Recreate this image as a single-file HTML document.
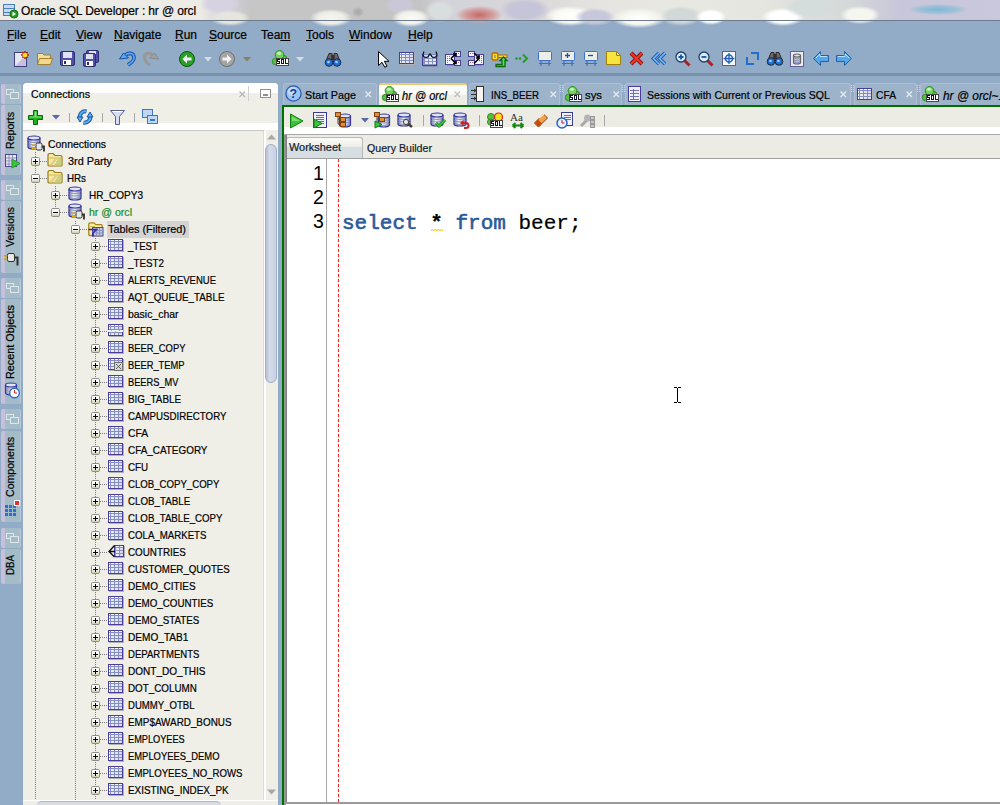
<!DOCTYPE html><html><head><meta charset="utf-8"><style>
*{margin:0;padding:0;box-sizing:border-box}
html,body{width:1000px;height:805px;overflow:hidden;background:#92abc6;font-family:"Liberation Sans",sans-serif;color:#000;position:relative}
.a{position:absolute}
.t{position:absolute;white-space:nowrap;line-height:1;-webkit-text-stroke:0.2px currentColor}
u{text-decoration:underline}
svg{overflow:visible}
</style></head><body><svg width="0" height="0" style="position:absolute"><defs><linearGradient id="gb" x1="0" y1="0" x2="0" y2="1"><stop offset="0" stop-color="#ffffff"/><stop offset="0.55" stop-color="#f4f4f0"/><stop offset="1" stop-color="#c8c89c"/></linearGradient><linearGradient id="cylg" x1="0" y1="0" x2="1" y2="0"><stop offset="0" stop-color="#7078b4"/><stop offset="0.38" stop-color="#f2f3fa"/><stop offset="0.72" stop-color="#c4c8dc"/><stop offset="1" stop-color="#6a70ac"/></linearGradient></defs></svg><div class="a" style="left:0px;top:0px;width:1000px;height:21px;background:linear-gradient(90deg,#ecebe5 0,#ecebe5 200px,#d4d2dc 225px,#c6c6c6 250px,#c4c4c4 420px,#d2d2da 445px,#d8d6d8 520px,#e6e4e0 600px,#e8e8e2 680px,#e6e6e0 760px,#d4d8d8 850px,#c8c6da 900px,#cac8dc 1000px);"></div><div class="a" style="left:200px;top:-6px;width:40px;height:20px;background:radial-gradient(ellipse at center,#d6d2e2 0,#d6d2e2 45%,transparent 72%);"></div><div class="a" style="left:210px;top:10px;width:40px;height:16px;background:radial-gradient(ellipse at center,#e6e6de 0,#e6e6de 45%,transparent 72%);"></div><div class="a" style="left:310px;top:9px;width:42px;height:18px;background:radial-gradient(ellipse at center,#f6f6f0 0,#eeeee8 45%,transparent 72%);"></div><div class="a" style="left:352px;top:7px;width:12px;height:10px;background:radial-gradient(ellipse at center,#a8a8a8 0,#b4b4b4 45%,transparent 72%);"></div><div class="a" style="left:385px;top:-4px;width:30px;height:18px;background:radial-gradient(ellipse at center,#cac8d8 0,#cac8d8 45%,transparent 72%);"></div><div class="a" style="left:392px;top:9px;width:38px;height:18px;background:radial-gradient(ellipse at center,#fafaf6 0,#f2f2ec 45%,transparent 72%);"></div><div class="a" style="left:425px;top:0px;width:30px;height:22px;background:radial-gradient(ellipse at center,#d8dede 0,#d8dede 45%,transparent 72%);"></div><div class="a" style="left:456px;top:6px;width:46px;height:18px;background:radial-gradient(ellipse at center,#c46a6a 0,#d4a0a0 45%,transparent 72%);"></div><div class="a" style="left:500px;top:-2px;width:50px;height:24px;background:radial-gradient(ellipse at center,#c6c4d8 0,#c6c4d8 45%,transparent 72%);"></div><div class="a" style="left:545px;top:6px;width:50px;height:20px;background:radial-gradient(ellipse at center,#ffffff 0,#fafaf4 45%,transparent 72%);"></div><div class="a" style="left:575px;top:8px;width:40px;height:18px;background:radial-gradient(ellipse at center,#c8c8dc 0,#c8c8dc 45%,transparent 72%);"></div><div class="a" style="left:612px;top:8px;width:54px;height:20px;background:radial-gradient(ellipse at center,#ffffff 0,#f6f6f0 45%,transparent 72%);"></div><div class="a" style="left:660px;top:6px;width:42px;height:20px;background:radial-gradient(ellipse at center,#d0d8d8 0,#d0d8d8 45%,transparent 72%);"></div><div class="a" style="left:696px;top:9px;width:30px;height:16px;background:radial-gradient(ellipse at center,#ffffff 0,#ffffff 45%,transparent 72%);"></div><div class="a" style="left:762px;top:8px;width:42px;height:18px;background:radial-gradient(ellipse at center,#ffffff 0,#ffffff 45%,transparent 72%);"></div><div class="a" style="left:785px;top:-4px;width:50px;height:22px;background:radial-gradient(ellipse at center,#d4dcdc 0,#d4dcdc 45%,transparent 72%);"></div><div class="a" style="left:840px;top:6px;width:40px;height:18px;background:radial-gradient(ellipse at center,#f6f6f0 0,#f6f6f0 45%,transparent 72%);"></div><div class="a" style="left:908px;top:4px;width:60px;height:11px;background:radial-gradient(ellipse at center,#7cb8d8 0,#a0c0d8 45%,transparent 72%);"></div><div class="a" style="left:0px;top:20px;width:1000px;height:1px;background:#707c8c;"></div><svg class="a" style="left:3px;top:4px" width="16" height="14" viewBox="0 0 16 14"><rect x="0.5" y="0.5" width="11" height="11" fill="#c8daf0" stroke="#4a80c0"/><rect x="1" y="4" width="10" height="1" fill="#4a80c0"/><rect x="1" y="8" width="10" height="1" fill="#4a80c0"/><circle cx="11" cy="10" r="4" fill="#20a020" stroke="#107010"/><path d="M9.5 7.8 l3.5 2.2 l-3.5 2.2z" fill="#fff"/></svg><div class="t" style="left:21px;top:5px;font-size:12px;color:#000;letter-spacing:-0.13px;">Oracle SQL Developer : hr @ orcl</div><div class="t" style="left:7px;top:29px;font-size:12px;color:#000;"><u>F</u>ile</div><div class="t" style="left:40px;top:29px;font-size:12px;color:#000;"><u>E</u>dit</div><div class="t" style="left:76px;top:29px;font-size:12px;color:#000;"><u>V</u>iew</div><div class="t" style="left:114px;top:29px;font-size:12px;color:#000;"><u>N</u>avigate</div><div class="t" style="left:175px;top:29px;font-size:12px;color:#000;"><u>R</u>un</div><div class="t" style="left:209px;top:29px;font-size:12px;color:#000;"><u>S</u>ource</div><div class="t" style="left:261px;top:29px;font-size:12px;color:#000;">Tea<u>m</u></div><div class="t" style="left:306px;top:29px;font-size:12px;color:#000;"><u>T</u>ools</div><div class="t" style="left:349px;top:29px;font-size:12px;color:#000;"><u>W</u>indow</div><div class="t" style="left:408px;top:29px;font-size:12px;color:#000;"><u>H</u>elp</div><div class="a" style="left:0px;top:73px;width:1000px;height:3px;background:#7891ac;"></div><div class="a" style="left:1px;top:84px;width:20px;height:20px;background:#a4bcc8;border-left:4px solid #c6c0da;border-right:1px solid #b8c8d8;border-radius:2px;"></div><svg class="a" style="left:6px;top:89px" width="13" height="10" viewBox="0 0 13 10" shape-rendering="crispEdges"><rect x="0.5" y="0.5" width="7" height="5" fill="none" stroke="#dce8ee"/><rect x="4.5" y="3.5" width="8" height="6" fill="#a4bcc8" stroke="#dce8ee"/></svg><div class="a" style="left:1px;top:105px;width:20px;height:70px;background:#a4bcc8;border-left:4px solid #c6c0da;border-right:1px solid #b8c8d8;border-radius:2px;"></div><div class="t" style="left:6px;top:149px;font-size:10px;transform-origin:0 0;transform:rotate(-90deg) scaleX(1.0567);">Reports</div><div class="a" style="left:1px;top:180px;width:20px;height:20px;background:#a4bcc8;border-left:4px solid #c6c0da;border-right:1px solid #b8c8d8;border-radius:2px;"></div><svg class="a" style="left:6px;top:185px" width="13" height="10" viewBox="0 0 13 10" shape-rendering="crispEdges"><rect x="0.5" y="0.5" width="7" height="5" fill="none" stroke="#dce8ee"/><rect x="4.5" y="3.5" width="8" height="6" fill="#a4bcc8" stroke="#dce8ee"/></svg><div class="a" style="left:1px;top:201px;width:20px;height:72px;background:#a4bcc8;border-left:4px solid #c6c0da;border-right:1px solid #b8c8d8;border-radius:2px;"></div><div class="t" style="left:6px;top:247px;font-size:10px;transform-origin:0 0;transform:rotate(-90deg) scaleX(1.0428);">Versions</div><div class="a" style="left:1px;top:278px;width:20px;height:20px;background:#a4bcc8;border-left:4px solid #c6c0da;border-right:1px solid #b8c8d8;border-radius:2px;"></div><svg class="a" style="left:6px;top:283px" width="13" height="10" viewBox="0 0 13 10" shape-rendering="crispEdges"><rect x="0.5" y="0.5" width="7" height="5" fill="none" stroke="#dce8ee"/><rect x="4.5" y="3.5" width="8" height="6" fill="#a4bcc8" stroke="#dce8ee"/></svg><div class="a" style="left:1px;top:299px;width:20px;height:105px;background:#a4bcc8;border-left:4px solid #c6c0da;border-right:1px solid #b8c8d8;border-radius:2px;"></div><div class="t" style="left:6px;top:379px;font-size:10px;transform-origin:0 0;transform:rotate(-90deg) scaleX(1.0823);">Recent Objects</div><div class="a" style="left:1px;top:409px;width:20px;height:20px;background:#a4bcc8;border-left:4px solid #c6c0da;border-right:1px solid #b8c8d8;border-radius:2px;"></div><svg class="a" style="left:6px;top:414px" width="13" height="10" viewBox="0 0 13 10" shape-rendering="crispEdges"><rect x="0.5" y="0.5" width="7" height="5" fill="none" stroke="#dce8ee"/><rect x="4.5" y="3.5" width="8" height="6" fill="#a4bcc8" stroke="#dce8ee"/></svg><div class="a" style="left:1px;top:431px;width:20px;height:91px;background:#a4bcc8;border-left:4px solid #c6c0da;border-right:1px solid #b8c8d8;border-radius:2px;"></div><div class="t" style="left:6px;top:497px;font-size:10px;transform-origin:0 0;transform:rotate(-90deg) scaleX(1.0581);">Components</div><div class="a" style="left:1px;top:528px;width:20px;height:20px;background:#a4bcc8;border-left:4px solid #c6c0da;border-right:1px solid #b8c8d8;border-radius:2px;"></div><svg class="a" style="left:6px;top:533px" width="13" height="10" viewBox="0 0 13 10" shape-rendering="crispEdges"><rect x="0.5" y="0.5" width="7" height="5" fill="none" stroke="#dce8ee"/><rect x="4.5" y="3.5" width="8" height="6" fill="#a4bcc8" stroke="#dce8ee"/></svg><div class="a" style="left:1px;top:549px;width:20px;height:35px;background:#a4bcc8;border-left:4px solid #c6c0da;border-right:1px solid #b8c8d8;border-radius:2px;"></div><div class="t" style="left:6px;top:575px;font-size:10px;transform-origin:0 0;transform:rotate(-90deg) scaleX(0.9726);">DBA</div><svg class="a" style="left:4px;top:153px" width="17" height="16" viewBox="0 0 17 16"><rect x="1.5" y="1.5" width="11" height="12" fill="#e8e8f4" stroke="#4a4a90"/><path d="M2 5 h10 M2 8 h10 M2 11 h10 M5 2 v11 M8.5 2 v11" stroke="#9090c0"/><path d="M8 6 l8 4.5 l-8 4.5z" fill="#40c040" stroke="#20a020"/></svg><svg class="a" style="left:4px;top:252px" width="17" height="15" viewBox="0 0 17 15"><rect x="3.5" y="1.5" width="7" height="8" rx="1.5" fill="#e8e8e8" stroke="#303030"/><rect x="0" y="3" width="3.5" height="1.6" fill="#d0a000"/><rect x="0" y="6.5" width="3.5" height="1.6" fill="#d0a000"/><path d="M10.5 5.5 h3 v8" fill="none" stroke="#303030" stroke-width="2"/></svg><svg class="a" style="left:4px;top:382px" width="17" height="17" viewBox="0 0 17 17"><path d="M1.5 3.0 v8 a5.5 2.0 0 0 0 11.0 0 v-8" fill="url(#cylg)" stroke="#34349a" stroke-width="1.2"/><path d="M2.1 5.2 a4.9 2.0 0 0 0 9.8 0" fill="none" stroke="#8c92b8" stroke-width="1"/><path d="M2.1 7.4 a4.9 2.0 0 0 0 9.8 0" fill="none" stroke="#8c92b8" stroke-width="1"/><path d="M2.1 9.7 a4.9 2.0 0 0 0 9.8 0" fill="none" stroke="#8c92b8" stroke-width="1"/><ellipse cx="7" cy="3.0" rx="5.5" ry="2.0" fill="#dfe4f4" stroke="#34349a" stroke-width="1.2"/><circle cx="10.5" cy="11" r="4.8" fill="#fff" stroke="#2a70c8" stroke-width="1.4"/><path d="M10.5 8 v3 h2.5" stroke="#d02020" fill="none"/></svg><svg class="a" style="left:4px;top:500px" width="17" height="17" viewBox="0 0 17 17" shape-rendering="crispEdges"><g fill="#2a70d0"><rect x="1" y="5" width="3" height="3" fill="#2a70d0"/><rect x="1" y="9" width="3" height="3" fill="#2a70d0"/><rect x="1" y="13" width="3" height="3" fill="#2a70d0"/><rect x="5" y="5" width="3" height="3" fill="#2a70d0"/><rect x="5" y="9" width="3" height="3" fill="#2a70d0"/><rect x="5" y="13" width="3" height="3" fill="#2a70d0"/><rect x="9" y="5" width="3" height="3" fill="#2a70d0"/><rect x="9" y="9" width="3" height="3" fill="#2a70d0"/><rect x="9" y="13" width="3" height="3" fill="#2a70d0"/></g><rect x="10.5" y="0.5" width="5" height="5" fill="#e03030" stroke="#fff"/></svg><div class="a" style="left:23px;top:83px;width:255px;height:722px;background:#efeee7;border-radius:4px 4px 0 0;"></div><div class="a" style="left:23px;top:83px;width:255px;height:10px;background:#ffffff;border-radius:4px 4px 0 0;"></div><div class="t" style="left:31px;top:89px;font-size:11px;color:#000;transform:scaleX(0.9642);transform-origin:0 0;">Connections</div><svg class="a" style="left:239px;top:91px" width="7" height="7" viewBox="0 0 7 7"><path d="M0.5 0.5 l5.5 5.5 M6 0.5 l-5.5 5.5" stroke="#b4b4b4" stroke-width="1.2"/></svg><div class="a" style="left:248px;top:86px;width:1px;height:15px;background:#d0d0d0;"></div><svg class="a" style="left:260px;top:89px" width="11" height="9" viewBox="0 0 11 9" shape-rendering="crispEdges"><rect x="0.5" y="0.5" width="10" height="8" fill="#fff" stroke="#909090"/><rect x="3" y="5" width="5" height="2" fill="#909090"/></svg><div class="a" style="left:23px;top:123px;width:255px;height:7px;background:#ffffff;"></div><div class="a" style="left:23px;top:130px;width:241px;height:1px;background:#c8c8c4;"></div><svg class="a" style="left:28px;top:110px" width="16" height="16" viewBox="0 0 16 16"><path d="M5.5 0.5 h4 v5 h5 v4 h-5 v5 h-4 v-5 h-5 v-4 h5z" fill="#20b020" stroke="#086808"/><path d="M6.5 1.5 h2 v5 h5 v1 h-12 v-1 h5z" fill="#80e880"/></svg><svg class="a" style="left:52px;top:115px" width="8" height="5" viewBox="0 0 8 5"><path d="M0 0 h8 l-4 4.5z" fill="#5868a8"/></svg><div class="a" style="left:69px;top:113px;width:1px;height:9px;background:#a8a8a8;"></div><svg class="a" style="left:77px;top:109px" width="16" height="16" viewBox="0 0 16 16"><path d="M9.5 2.5 A5.5 5.5 0 0 0 3 9.5" fill="none" stroke="#1a58a8" stroke-width="4"/><path d="M6.5 13.5 A5.5 5.5 0 0 0 13 6.5" fill="none" stroke="#1a58a8" stroke-width="4"/><path d="M9.5 2.5 A5.5 5.5 0 0 0 3 9.5" fill="none" stroke="#58b0f0" stroke-width="2"/><path d="M6.5 13.5 A5.5 5.5 0 0 0 13 6.5" fill="none" stroke="#58b0f0" stroke-width="2"/><path d="M0 8 h6 l-3 5z" fill="#58b0f0" stroke="#1a58a8"/><path d="M16 8 h-6 l3 -5z" fill="#58b0f0" stroke="#1a58a8"/></svg><div class="a" style="left:102px;top:113px;width:1px;height:9px;background:#a8a8a8;"></div><svg class="a" style="left:110px;top:110px" width="15" height="15" viewBox="0 0 15 15"><path d="M0.5 0.5 h14 l-5 6 v8 h-4 v-8z" fill="#d8dcf0" stroke="#5a6090"/><path d="M2.5 1.5 h10" stroke="#fff"/></svg><div class="a" style="left:134px;top:113px;width:1px;height:9px;background:#a8a8a8;"></div><svg class="a" style="left:142px;top:109px" width="16" height="16" viewBox="0 0 16 16" shape-rendering="crispEdges"><rect x="0.5" y="0.5" width="10" height="8" fill="#c0d8f8" stroke="#3a78c8"/><rect x="5.5" y="6.5" width="10" height="8" fill="#c0d8f8" stroke="#3a78c8"/><rect x="8" y="10" width="5" height="2" fill="#3a78c8"/></svg><div class="a" style="left:263px;top:131px;width:1px;height:669px;background:#d4dce0;"></div><div class="a" style="left:264px;top:131px;width:2px;height:669px;background:#ffffff;"></div><svg class="a" style="left:266px;top:134px" width="11" height="6" viewBox="0 0 11 6"><path d="M1 5.5 h9 l-4.5 -5z" fill="#a8a8a8"/></svg><div class="a" style="left:265px;top:144px;width:12px;height:239px;background:linear-gradient(90deg,#b4c0d6 0,#d4dae8 35%,#c8d0e0 100%);border:1px solid #a0b0c8;border-radius:6px;"></div><svg class="a" style="left:266px;top:789px" width="11" height="6" viewBox="0 0 11 6"><path d="M1 0.5 h9 l-4.5 5z" fill="#a8a8a8"/></svg><div class="a" style="left:23px;top:800px;width:255px;height:1px;background:#ffffff;"></div><div class="a" style="left:23px;top:801px;width:241px;height:4px;background:#efeee7;"></div><div class="a" style="left:37px;top:801px;width:184px;height:5px;background:#d8dce2;border-radius:5px 5px 0 0;border-top:1px solid #b8b0d8;"></div><div class="a" style="left:35px;top:152px;width:1px;height:648px;background:repeating-linear-gradient(180deg,#7c7c7c 0 1px,transparent 1px 2px)"></div><div class="a" style="left:55px;top:186px;width:1px;height:26px;background:repeating-linear-gradient(180deg,#7c7c7c 0 1px,transparent 1px 2px)"></div><div class="a" style="left:75px;top:221px;width:1px;height:579px;background:repeating-linear-gradient(180deg,#7c7c7c 0 1px,transparent 1px 2px)"></div><div class="a" style="left:95px;top:238px;width:1px;height:562px;background:repeating-linear-gradient(180deg,#7c7c7c 0 1px,transparent 1px 2px)"></div><svg class="a" style="left:27px;top:135px" width="18" height="18" viewBox="0 0 18 18"><path d="M1 3.0 v9 a6 2.0 0 0 0 12 0 v-9" fill="url(#cylg)" stroke="#34349a" stroke-width="1.2"/><path d="M1.6 5.5 a5.4 2.0 0 0 0 10.8 0" fill="none" stroke="#8c92b8" stroke-width="1"/><path d="M1.6 8.0 a5.4 2.0 0 0 0 10.8 0" fill="none" stroke="#8c92b8" stroke-width="1"/><path d="M1.6 10.5 a5.4 2.0 0 0 0 10.8 0" fill="none" stroke="#8c92b8" stroke-width="1"/><ellipse cx="7" cy="3.0" rx="6" ry="2.0" fill="#dfe4f4" stroke="#34349a" stroke-width="1.2"/><rect x="9" y="8" width="6" height="7" rx="1.5" fill="#e8e8e8" stroke="#303030"/><rect x="5" y="9.5" width="4" height="1.5" fill="#e0b000"/><rect x="5" y="12.5" width="4" height="1.5" fill="#e0b000"/><path d="M15 11.5 h2 v5" fill="none" stroke="#303030" stroke-width="1.8"/></svg><div class="t" style="left:48px;top:139px;font-size:11px;color:#000;transform:scaleX(0.9479);transform-origin:0 0;">Connections</div><svg class="a" style="left:31px;top:157px" width="9" height="9" viewBox="0 0 9 9"><rect x="0.5" y="0.5" width="8" height="8" rx="1.2" fill="url(#gb)" stroke="#8c8c88"/><rect x="2" y="4" width="5" height="1" fill="#000"/><rect x="4" y="2" width="1" height="5" fill="#000"/></svg><div class="a" style="left:40px;top:161px;width:8px;height:1px;background:repeating-linear-gradient(90deg,#7c7c7c 0 1px,transparent 1px 2px)"></div><svg class="a" style="left:47px;top:153px" width="17" height="15" viewBox="0 0 17 15"><path d="M1 2.5 Q1 0.5 3 0.5 h3 l2 2 h5.5 Q15 2.5 15 4 v8 Q15 13 13.5 13 h-11 Q1 13 1 12z" fill="#f2eaa8" stroke="#9a7818" stroke-width="1.2"/><path d="M1.6 5 h12.8" stroke="#d8c050" stroke-width="1.2"/><path d="M2 12.4 L8 5.6 h3 L4.5 12.4z" fill="#e8c888"/><path d="M7 12.4 L11.5 5.6 h2.9 v6.8z" fill="#c8d080"/></svg><div class="t" style="left:68px;top:156px;font-size:11px;color:#000;transform:scaleX(0.9853);transform-origin:0 0;">3rd Party</div><svg class="a" style="left:31px;top:174px" width="9" height="9" viewBox="0 0 9 9"><rect x="0.5" y="0.5" width="8" height="8" rx="1.2" fill="url(#gb)" stroke="#8c8c88"/><rect x="2" y="4" width="5" height="1" fill="#000"/></svg><div class="a" style="left:40px;top:178px;width:8px;height:1px;background:repeating-linear-gradient(90deg,#7c7c7c 0 1px,transparent 1px 2px)"></div><svg class="a" style="left:47px;top:170px" width="17" height="15" viewBox="0 0 17 15"><path d="M1 2.5 Q1 0.5 3 0.5 h3 l2 2 h5.5 Q15 2.5 15 4 v8 Q15 13 13.5 13 h-11 Q1 13 1 12z" fill="#f2eaa8" stroke="#9a7818" stroke-width="1.2"/><path d="M1.6 5 h12.8" stroke="#d8c050" stroke-width="1.2"/><path d="M2 12.4 L8 5.6 h3 L4.5 12.4z" fill="#e8c888"/><path d="M7 12.4 L11.5 5.6 h2.9 v6.8z" fill="#c8d080"/></svg><div class="t" style="left:67px;top:173px;font-size:11px;color:#000;transform:scaleX(0.8889);transform-origin:0 0;">HRs</div><svg class="a" style="left:51px;top:191px" width="9" height="9" viewBox="0 0 9 9"><rect x="0.5" y="0.5" width="8" height="8" rx="1.2" fill="url(#gb)" stroke="#8c8c88"/><rect x="2" y="4" width="5" height="1" fill="#000"/><rect x="4" y="2" width="1" height="5" fill="#000"/></svg><div class="a" style="left:60px;top:195px;width:9px;height:1px;background:repeating-linear-gradient(90deg,#7c7c7c 0 1px,transparent 1px 2px)"></div><svg class="a" style="left:68px;top:186px" width="18" height="17" viewBox="0 0 18 17"><path d="M1 3.0 v9 a6 2.0 0 0 0 12 0 v-9" fill="url(#cylg)" stroke="#34349a" stroke-width="1.2"/><path d="M1.6 5.5 a5.4 2.0 0 0 0 10.8 0" fill="none" stroke="#8c92b8" stroke-width="1"/><path d="M1.6 8.0 a5.4 2.0 0 0 0 10.8 0" fill="none" stroke="#8c92b8" stroke-width="1"/><path d="M1.6 10.5 a5.4 2.0 0 0 0 10.8 0" fill="none" stroke="#8c92b8" stroke-width="1"/><ellipse cx="7" cy="3.0" rx="6" ry="2.0" fill="#dfe4f4" stroke="#34349a" stroke-width="1.2"/></svg><div class="t" style="left:89px;top:190px;font-size:11px;color:#000;transform:scaleX(0.9104);transform-origin:0 0;">HR_COPY3</div><svg class="a" style="left:51px;top:208px" width="9" height="9" viewBox="0 0 9 9"><rect x="0.5" y="0.5" width="8" height="8" rx="1.2" fill="url(#gb)" stroke="#8c8c88"/><rect x="2" y="4" width="5" height="1" fill="#000"/></svg><div class="a" style="left:60px;top:212px;width:9px;height:1px;background:repeating-linear-gradient(90deg,#7c7c7c 0 1px,transparent 1px 2px)"></div><svg class="a" style="left:68px;top:203px" width="18" height="17" viewBox="0 0 18 17"><path d="M1 3.0 v9 a6 2.0 0 0 0 12 0 v-9" fill="url(#cylg)" stroke="#34349a" stroke-width="1.2"/><path d="M1.6 5.5 a5.4 2.0 0 0 0 10.8 0" fill="none" stroke="#8c92b8" stroke-width="1"/><path d="M1.6 8.0 a5.4 2.0 0 0 0 10.8 0" fill="none" stroke="#8c92b8" stroke-width="1"/><path d="M1.6 10.5 a5.4 2.0 0 0 0 10.8 0" fill="none" stroke="#8c92b8" stroke-width="1"/><ellipse cx="7" cy="3.0" rx="6" ry="2.0" fill="#dfe4f4" stroke="#34349a" stroke-width="1.2"/><rect x="8" y="8" width="6" height="7" rx="1.5" fill="#e8e8e8" stroke="#303030"/><rect x="4" y="9.5" width="4" height="1.5" fill="#e0b000"/><rect x="4" y="12.5" width="4" height="1.5" fill="#e0b000"/><path d="M14 11.5 h2 v5" fill="none" stroke="#303030" stroke-width="1.8"/></svg><div class="t" style="left:89px;top:207px;font-size:11px;color:#148a2a;transform:scaleX(0.9599);transform-origin:0 0;">hr @ orcl</div><div class="a" style="left:107px;top:221px;width:82px;height:17px;background:#d4d4d4;"></div><svg class="a" style="left:71px;top:225px" width="9" height="9" viewBox="0 0 9 9"><rect x="0.5" y="0.5" width="8" height="8" rx="1.2" fill="url(#gb)" stroke="#8c8c88"/><rect x="2" y="4" width="5" height="1" fill="#000"/></svg><div class="a" style="left:80px;top:229px;width:8px;height:1px;background:repeating-linear-gradient(90deg,#7c7c7c 0 1px,transparent 1px 2px)"></div><svg class="a" style="left:88px;top:222px" width="17" height="16" viewBox="0 0 17 16"><path d="M0.8 12.5 V2.5 Q0.8 0.8 2.5 0.8 h3.5 l1.8 1.8 h5.5 Q14.2 2.6 14.2 4 v8.5 Q14.2 13.5 13 13.5 H2 Q0.8 13.5 0.8 12.5z" fill="#f6f0b0" stroke="#a88418" stroke-width="1.3"/><path d="M1.5 4.5 h5.5" stroke="#e0c040" stroke-width="1.2"/><rect x="4.5" y="5.5" width="10.5" height="8.5" fill="#c4c8e4" stroke="#4a4a9a"/><path d="M5 8.5 h9.5 M5 11 h9.5 M8.5 6 v8 M11.5 6 v8" stroke="#8a94c0" stroke-width="1"/><path d="M0.5 7.5 h8 l-3.5 3.5 v3.5" stroke="#3a2a9a" stroke-width="1.6" fill="none"/></svg><div class="t" style="left:108px;top:224px;font-size:11px;color:#000;transform:scaleX(0.9889);transform-origin:0 0;">Tables (Filtered)</div><svg class="a" style="left:91px;top:242px" width="9" height="9" viewBox="0 0 9 9"><rect x="0.5" y="0.5" width="8" height="8" rx="1.2" fill="url(#gb)" stroke="#8c8c88"/><rect x="2" y="4" width="5" height="1" fill="#000"/><rect x="4" y="2" width="1" height="5" fill="#000"/></svg><div class="a" style="left:100px;top:246px;width:8px;height:1px;background:repeating-linear-gradient(90deg,#7c7c7c 0 1px,transparent 1px 2px)"></div><svg class="a" style="left:108px;top:239px" width="16" height="13" viewBox="0 0 16 13" shape-rendering="crispEdges"><rect x="1" y="12" width="15" height="1" fill="#b0b0b8"/><rect x="15" y="1" width="1" height="12" fill="#b0b0b8"/><rect x="0" y="0" width="15" height="12" fill="#4a3c98"/><rect x="1" y="1" width="13" height="10" fill="#8290c0"/><rect x="1" y="1" width="1" height="1" fill="#fff"/><rect x="3" y="1" width="3" height="1" fill="#f4f4ff"/><rect x="7" y="1" width="3" height="1" fill="#f4f4ff"/><rect x="11" y="1" width="3" height="1" fill="#f4f4ff"/><rect x="1" y="3" width="1" height="2" fill="#ffffff"/><rect x="3" y="3" width="3" height="2" fill="#eceaf0"/><rect x="7" y="3" width="3" height="2" fill="#e4e4f0"/><rect x="11" y="3" width="3" height="2" fill="#dcdcf0"/><rect x="1" y="6" width="1" height="2" fill="#ffffff"/><rect x="3" y="6" width="3" height="2" fill="#eceaf0"/><rect x="7" y="6" width="3" height="2" fill="#e4e4f0"/><rect x="11" y="6" width="3" height="2" fill="#dcdcf0"/><rect x="1" y="9" width="1" height="2" fill="#ffffff"/><rect x="3" y="9" width="3" height="2" fill="#eceaf0"/><rect x="7" y="9" width="3" height="2" fill="#e4e4f0"/><rect x="11" y="9" width="3" height="2" fill="#dcdcf0"/></svg><div class="t" style="left:127.5px;top:241px;font-size:11px;color:#000;transform:scaleX(0.8730);transform-origin:0 0;">_TEST</div><svg class="a" style="left:91px;top:259px" width="9" height="9" viewBox="0 0 9 9"><rect x="0.5" y="0.5" width="8" height="8" rx="1.2" fill="url(#gb)" stroke="#8c8c88"/><rect x="2" y="4" width="5" height="1" fill="#000"/><rect x="4" y="2" width="1" height="5" fill="#000"/></svg><div class="a" style="left:100px;top:263px;width:8px;height:1px;background:repeating-linear-gradient(90deg,#7c7c7c 0 1px,transparent 1px 2px)"></div><svg class="a" style="left:108px;top:256px" width="16" height="13" viewBox="0 0 16 13" shape-rendering="crispEdges"><rect x="1" y="12" width="15" height="1" fill="#b0b0b8"/><rect x="15" y="1" width="1" height="12" fill="#b0b0b8"/><rect x="0" y="0" width="15" height="12" fill="#4a3c98"/><rect x="1" y="1" width="13" height="10" fill="#8290c0"/><rect x="1" y="1" width="1" height="1" fill="#fff"/><rect x="3" y="1" width="3" height="1" fill="#f4f4ff"/><rect x="7" y="1" width="3" height="1" fill="#f4f4ff"/><rect x="11" y="1" width="3" height="1" fill="#f4f4ff"/><rect x="1" y="3" width="1" height="2" fill="#ffffff"/><rect x="3" y="3" width="3" height="2" fill="#eceaf0"/><rect x="7" y="3" width="3" height="2" fill="#e4e4f0"/><rect x="11" y="3" width="3" height="2" fill="#dcdcf0"/><rect x="1" y="6" width="1" height="2" fill="#ffffff"/><rect x="3" y="6" width="3" height="2" fill="#eceaf0"/><rect x="7" y="6" width="3" height="2" fill="#e4e4f0"/><rect x="11" y="6" width="3" height="2" fill="#dcdcf0"/><rect x="1" y="9" width="1" height="2" fill="#ffffff"/><rect x="3" y="9" width="3" height="2" fill="#eceaf0"/><rect x="7" y="9" width="3" height="2" fill="#e4e4f0"/><rect x="11" y="9" width="3" height="2" fill="#dcdcf0"/></svg><div class="t" style="left:127.5px;top:258px;font-size:11px;color:#000;transform:scaleX(0.8941);transform-origin:0 0;">_TEST2</div><svg class="a" style="left:91px;top:276px" width="9" height="9" viewBox="0 0 9 9"><rect x="0.5" y="0.5" width="8" height="8" rx="1.2" fill="url(#gb)" stroke="#8c8c88"/><rect x="2" y="4" width="5" height="1" fill="#000"/><rect x="4" y="2" width="1" height="5" fill="#000"/></svg><div class="a" style="left:100px;top:280px;width:8px;height:1px;background:repeating-linear-gradient(90deg,#7c7c7c 0 1px,transparent 1px 2px)"></div><svg class="a" style="left:108px;top:273px" width="16" height="13" viewBox="0 0 16 13" shape-rendering="crispEdges"><rect x="1" y="12" width="15" height="1" fill="#b0b0b8"/><rect x="15" y="1" width="1" height="12" fill="#b0b0b8"/><rect x="0" y="0" width="15" height="12" fill="#4a3c98"/><rect x="1" y="1" width="13" height="10" fill="#8290c0"/><rect x="1" y="1" width="1" height="1" fill="#fff"/><rect x="3" y="1" width="3" height="1" fill="#f4f4ff"/><rect x="7" y="1" width="3" height="1" fill="#f4f4ff"/><rect x="11" y="1" width="3" height="1" fill="#f4f4ff"/><rect x="1" y="3" width="1" height="2" fill="#ffffff"/><rect x="3" y="3" width="3" height="2" fill="#eceaf0"/><rect x="7" y="3" width="3" height="2" fill="#e4e4f0"/><rect x="11" y="3" width="3" height="2" fill="#dcdcf0"/><rect x="1" y="6" width="1" height="2" fill="#ffffff"/><rect x="3" y="6" width="3" height="2" fill="#eceaf0"/><rect x="7" y="6" width="3" height="2" fill="#e4e4f0"/><rect x="11" y="6" width="3" height="2" fill="#dcdcf0"/><rect x="1" y="9" width="1" height="2" fill="#ffffff"/><rect x="3" y="9" width="3" height="2" fill="#eceaf0"/><rect x="7" y="9" width="3" height="2" fill="#e4e4f0"/><rect x="11" y="9" width="3" height="2" fill="#dcdcf0"/></svg><div class="t" style="left:127.5px;top:275px;font-size:11px;color:#000;transform:scaleX(0.8634);transform-origin:0 0;">ALERTS_REVENUE</div><svg class="a" style="left:91px;top:293px" width="9" height="9" viewBox="0 0 9 9"><rect x="0.5" y="0.5" width="8" height="8" rx="1.2" fill="url(#gb)" stroke="#8c8c88"/><rect x="2" y="4" width="5" height="1" fill="#000"/><rect x="4" y="2" width="1" height="5" fill="#000"/></svg><div class="a" style="left:100px;top:297px;width:8px;height:1px;background:repeating-linear-gradient(90deg,#7c7c7c 0 1px,transparent 1px 2px)"></div><svg class="a" style="left:108px;top:290px" width="16" height="13" viewBox="0 0 16 13" shape-rendering="crispEdges"><rect x="1" y="12" width="15" height="1" fill="#b0b0b8"/><rect x="15" y="1" width="1" height="12" fill="#b0b0b8"/><rect x="0" y="0" width="15" height="12" fill="#4a3c98"/><rect x="1" y="1" width="13" height="10" fill="#8290c0"/><rect x="1" y="1" width="1" height="1" fill="#fff"/><rect x="3" y="1" width="3" height="1" fill="#f4f4ff"/><rect x="7" y="1" width="3" height="1" fill="#f4f4ff"/><rect x="11" y="1" width="3" height="1" fill="#f4f4ff"/><rect x="1" y="3" width="1" height="2" fill="#ffffff"/><rect x="3" y="3" width="3" height="2" fill="#eceaf0"/><rect x="7" y="3" width="3" height="2" fill="#e4e4f0"/><rect x="11" y="3" width="3" height="2" fill="#dcdcf0"/><rect x="1" y="6" width="1" height="2" fill="#ffffff"/><rect x="3" y="6" width="3" height="2" fill="#eceaf0"/><rect x="7" y="6" width="3" height="2" fill="#e4e4f0"/><rect x="11" y="6" width="3" height="2" fill="#dcdcf0"/><rect x="1" y="9" width="1" height="2" fill="#ffffff"/><rect x="3" y="9" width="3" height="2" fill="#eceaf0"/><rect x="7" y="9" width="3" height="2" fill="#e4e4f0"/><rect x="11" y="9" width="3" height="2" fill="#dcdcf0"/></svg><div class="t" style="left:127.5px;top:292px;font-size:11px;color:#000;transform:scaleX(0.8930);transform-origin:0 0;">AQT_QUEUE_TABLE</div><svg class="a" style="left:91px;top:310px" width="9" height="9" viewBox="0 0 9 9"><rect x="0.5" y="0.5" width="8" height="8" rx="1.2" fill="url(#gb)" stroke="#8c8c88"/><rect x="2" y="4" width="5" height="1" fill="#000"/><rect x="4" y="2" width="1" height="5" fill="#000"/></svg><div class="a" style="left:100px;top:314px;width:8px;height:1px;background:repeating-linear-gradient(90deg,#7c7c7c 0 1px,transparent 1px 2px)"></div><svg class="a" style="left:108px;top:307px" width="16" height="13" viewBox="0 0 16 13" shape-rendering="crispEdges"><rect x="1" y="12" width="15" height="1" fill="#b0b0b8"/><rect x="15" y="1" width="1" height="12" fill="#b0b0b8"/><rect x="0" y="0" width="15" height="12" fill="#4a3c98"/><rect x="1" y="1" width="13" height="10" fill="#8290c0"/><rect x="1" y="1" width="1" height="1" fill="#fff"/><rect x="3" y="1" width="3" height="1" fill="#f4f4ff"/><rect x="7" y="1" width="3" height="1" fill="#f4f4ff"/><rect x="11" y="1" width="3" height="1" fill="#f4f4ff"/><rect x="1" y="3" width="1" height="2" fill="#ffffff"/><rect x="3" y="3" width="3" height="2" fill="#eceaf0"/><rect x="7" y="3" width="3" height="2" fill="#e4e4f0"/><rect x="11" y="3" width="3" height="2" fill="#dcdcf0"/><rect x="1" y="6" width="1" height="2" fill="#ffffff"/><rect x="3" y="6" width="3" height="2" fill="#eceaf0"/><rect x="7" y="6" width="3" height="2" fill="#e4e4f0"/><rect x="11" y="6" width="3" height="2" fill="#dcdcf0"/><rect x="1" y="9" width="1" height="2" fill="#ffffff"/><rect x="3" y="9" width="3" height="2" fill="#eceaf0"/><rect x="7" y="9" width="3" height="2" fill="#e4e4f0"/><rect x="11" y="9" width="3" height="2" fill="#dcdcf0"/></svg><div class="t" style="left:127.5px;top:309px;font-size:11px;color:#000;transform:scaleX(0.9489);transform-origin:0 0;">basic_char</div><svg class="a" style="left:91px;top:327px" width="9" height="9" viewBox="0 0 9 9"><rect x="0.5" y="0.5" width="8" height="8" rx="1.2" fill="url(#gb)" stroke="#8c8c88"/><rect x="2" y="4" width="5" height="1" fill="#000"/><rect x="4" y="2" width="1" height="5" fill="#000"/></svg><div class="a" style="left:100px;top:331px;width:8px;height:1px;background:repeating-linear-gradient(90deg,#7c7c7c 0 1px,transparent 1px 2px)"></div><svg class="a" style="left:108px;top:324px" width="16" height="13" viewBox="0 0 16 13" shape-rendering="crispEdges"><rect x="1" y="12" width="15" height="1" fill="#b0b0b8"/><rect x="15" y="1" width="1" height="12" fill="#b0b0b8"/><rect x="0" y="0" width="15" height="12" fill="#4a3c98"/><rect x="1" y="1" width="13" height="10" fill="#8290c0"/><rect x="1" y="1" width="1" height="1" fill="#fff"/><rect x="3" y="1" width="3" height="1" fill="#f4f4ff"/><rect x="7" y="1" width="3" height="1" fill="#f4f4ff"/><rect x="11" y="1" width="3" height="1" fill="#f4f4ff"/><rect x="1" y="3" width="1" height="2" fill="#ffffff"/><rect x="3" y="3" width="3" height="2" fill="#eceaf0"/><rect x="7" y="3" width="3" height="2" fill="#e4e4f0"/><rect x="11" y="3" width="3" height="2" fill="#dcdcf0"/><rect x="1" y="6" width="1" height="2" fill="#ffffff"/><rect x="3" y="6" width="3" height="2" fill="#eceaf0"/><rect x="7" y="6" width="3" height="2" fill="#e4e4f0"/><rect x="11" y="6" width="3" height="2" fill="#dcdcf0"/><rect x="1" y="9" width="1" height="2" fill="#ffffff"/><rect x="3" y="9" width="3" height="2" fill="#eceaf0"/><rect x="7" y="9" width="3" height="2" fill="#e4e4f0"/><rect x="11" y="9" width="3" height="2" fill="#dcdcf0"/></svg><svg class="a" style="left:108px;top:324px" width="16" height="13" viewBox="0 0 16 13" shape-rendering="crispEdges"><rect x="0" y="6" width="15" height="2" fill="#f2f4f0"/><rect x="3" y="6" width="1" height="1" fill="#a8b8d0"/><rect x="7" y="7" width="1" height="1" fill="#b8a8d8"/><rect x="11" y="6" width="1" height="1" fill="#a8b8d0"/></svg><div class="t" style="left:127.5px;top:326px;font-size:11px;color:#000;transform:scaleX(0.8175);transform-origin:0 0;">BEER</div><svg class="a" style="left:91px;top:344px" width="9" height="9" viewBox="0 0 9 9"><rect x="0.5" y="0.5" width="8" height="8" rx="1.2" fill="url(#gb)" stroke="#8c8c88"/><rect x="2" y="4" width="5" height="1" fill="#000"/><rect x="4" y="2" width="1" height="5" fill="#000"/></svg><div class="a" style="left:100px;top:348px;width:8px;height:1px;background:repeating-linear-gradient(90deg,#7c7c7c 0 1px,transparent 1px 2px)"></div><svg class="a" style="left:108px;top:341px" width="16" height="13" viewBox="0 0 16 13" shape-rendering="crispEdges"><rect x="1" y="12" width="15" height="1" fill="#b0b0b8"/><rect x="15" y="1" width="1" height="12" fill="#b0b0b8"/><rect x="0" y="0" width="15" height="12" fill="#4a3c98"/><rect x="1" y="1" width="13" height="10" fill="#8290c0"/><rect x="1" y="1" width="1" height="1" fill="#fff"/><rect x="3" y="1" width="3" height="1" fill="#f4f4ff"/><rect x="7" y="1" width="3" height="1" fill="#f4f4ff"/><rect x="11" y="1" width="3" height="1" fill="#f4f4ff"/><rect x="1" y="3" width="1" height="2" fill="#ffffff"/><rect x="3" y="3" width="3" height="2" fill="#eceaf0"/><rect x="7" y="3" width="3" height="2" fill="#e4e4f0"/><rect x="11" y="3" width="3" height="2" fill="#dcdcf0"/><rect x="1" y="6" width="1" height="2" fill="#ffffff"/><rect x="3" y="6" width="3" height="2" fill="#eceaf0"/><rect x="7" y="6" width="3" height="2" fill="#e4e4f0"/><rect x="11" y="6" width="3" height="2" fill="#dcdcf0"/><rect x="1" y="9" width="1" height="2" fill="#ffffff"/><rect x="3" y="9" width="3" height="2" fill="#eceaf0"/><rect x="7" y="9" width="3" height="2" fill="#e4e4f0"/><rect x="11" y="9" width="3" height="2" fill="#dcdcf0"/></svg><div class="t" style="left:127.5px;top:343px;font-size:11px;color:#000;transform:scaleX(0.8546);transform-origin:0 0;">BEER_COPY</div><svg class="a" style="left:91px;top:361px" width="9" height="9" viewBox="0 0 9 9"><rect x="0.5" y="0.5" width="8" height="8" rx="1.2" fill="url(#gb)" stroke="#8c8c88"/><rect x="2" y="4" width="5" height="1" fill="#000"/><rect x="4" y="2" width="1" height="5" fill="#000"/></svg><div class="a" style="left:100px;top:365px;width:8px;height:1px;background:repeating-linear-gradient(90deg,#7c7c7c 0 1px,transparent 1px 2px)"></div><svg class="a" style="left:108px;top:358px" width="16" height="13" viewBox="0 0 16 13" shape-rendering="crispEdges"><rect x="1" y="12" width="15" height="1" fill="#b0b0b8"/><rect x="15" y="1" width="1" height="12" fill="#b0b0b8"/><rect x="0" y="0" width="15" height="12" fill="#4a3c98"/><rect x="1" y="1" width="13" height="10" fill="#8290c0"/><rect x="1" y="1" width="1" height="1" fill="#fff"/><rect x="3" y="1" width="3" height="1" fill="#f4f4ff"/><rect x="7" y="1" width="3" height="1" fill="#f4f4ff"/><rect x="11" y="1" width="3" height="1" fill="#f4f4ff"/><rect x="1" y="3" width="1" height="2" fill="#ffffff"/><rect x="3" y="3" width="3" height="2" fill="#eceaf0"/><rect x="7" y="3" width="3" height="2" fill="#e4e4f0"/><rect x="11" y="3" width="3" height="2" fill="#dcdcf0"/><rect x="1" y="6" width="1" height="2" fill="#ffffff"/><rect x="3" y="6" width="3" height="2" fill="#eceaf0"/><rect x="7" y="6" width="3" height="2" fill="#e4e4f0"/><rect x="11" y="6" width="3" height="2" fill="#dcdcf0"/><rect x="1" y="9" width="1" height="2" fill="#ffffff"/><rect x="3" y="9" width="3" height="2" fill="#eceaf0"/><rect x="7" y="9" width="3" height="2" fill="#e4e4f0"/><rect x="11" y="9" width="3" height="2" fill="#dcdcf0"/></svg><svg class="a" style="left:114px;top:362px" width="9" height="9" viewBox="0 0 9 9" shape-rendering="crispEdges"><rect x="0.5" y="0.5" width="8" height="8" fill="#d8d8d8" stroke="#707070"/><path d="M2 2 l5 5 M7 2 l-5 5" stroke="#606060"/></svg><div class="t" style="left:127.5px;top:360px;font-size:11px;color:#000;transform:scaleX(0.8476);transform-origin:0 0;">BEER_TEMP</div><svg class="a" style="left:91px;top:378px" width="9" height="9" viewBox="0 0 9 9"><rect x="0.5" y="0.5" width="8" height="8" rx="1.2" fill="url(#gb)" stroke="#8c8c88"/><rect x="2" y="4" width="5" height="1" fill="#000"/><rect x="4" y="2" width="1" height="5" fill="#000"/></svg><div class="a" style="left:100px;top:382px;width:8px;height:1px;background:repeating-linear-gradient(90deg,#7c7c7c 0 1px,transparent 1px 2px)"></div><svg class="a" style="left:108px;top:375px" width="16" height="13" viewBox="0 0 16 13" shape-rendering="crispEdges"><rect x="1" y="12" width="15" height="1" fill="#b0b0b8"/><rect x="15" y="1" width="1" height="12" fill="#b0b0b8"/><rect x="0" y="0" width="15" height="12" fill="#4a3c98"/><rect x="1" y="1" width="13" height="10" fill="#8290c0"/><rect x="1" y="1" width="1" height="1" fill="#fff"/><rect x="3" y="1" width="3" height="1" fill="#f4f4ff"/><rect x="7" y="1" width="3" height="1" fill="#f4f4ff"/><rect x="11" y="1" width="3" height="1" fill="#f4f4ff"/><rect x="1" y="3" width="1" height="2" fill="#ffffff"/><rect x="3" y="3" width="3" height="2" fill="#eceaf0"/><rect x="7" y="3" width="3" height="2" fill="#e4e4f0"/><rect x="11" y="3" width="3" height="2" fill="#dcdcf0"/><rect x="1" y="6" width="1" height="2" fill="#ffffff"/><rect x="3" y="6" width="3" height="2" fill="#eceaf0"/><rect x="7" y="6" width="3" height="2" fill="#e4e4f0"/><rect x="11" y="6" width="3" height="2" fill="#dcdcf0"/><rect x="1" y="9" width="1" height="2" fill="#ffffff"/><rect x="3" y="9" width="3" height="2" fill="#eceaf0"/><rect x="7" y="9" width="3" height="2" fill="#e4e4f0"/><rect x="11" y="9" width="3" height="2" fill="#dcdcf0"/></svg><div class="t" style="left:127.5px;top:377px;font-size:11px;color:#000;transform:scaleX(0.8425);transform-origin:0 0;">BEERS_MV</div><svg class="a" style="left:91px;top:395px" width="9" height="9" viewBox="0 0 9 9"><rect x="0.5" y="0.5" width="8" height="8" rx="1.2" fill="url(#gb)" stroke="#8c8c88"/><rect x="2" y="4" width="5" height="1" fill="#000"/><rect x="4" y="2" width="1" height="5" fill="#000"/></svg><div class="a" style="left:100px;top:399px;width:8px;height:1px;background:repeating-linear-gradient(90deg,#7c7c7c 0 1px,transparent 1px 2px)"></div><svg class="a" style="left:108px;top:392px" width="16" height="13" viewBox="0 0 16 13" shape-rendering="crispEdges"><rect x="1" y="12" width="15" height="1" fill="#b0b0b8"/><rect x="15" y="1" width="1" height="12" fill="#b0b0b8"/><rect x="0" y="0" width="15" height="12" fill="#4a3c98"/><rect x="1" y="1" width="13" height="10" fill="#8290c0"/><rect x="1" y="1" width="1" height="1" fill="#fff"/><rect x="3" y="1" width="3" height="1" fill="#f4f4ff"/><rect x="7" y="1" width="3" height="1" fill="#f4f4ff"/><rect x="11" y="1" width="3" height="1" fill="#f4f4ff"/><rect x="1" y="3" width="1" height="2" fill="#ffffff"/><rect x="3" y="3" width="3" height="2" fill="#eceaf0"/><rect x="7" y="3" width="3" height="2" fill="#e4e4f0"/><rect x="11" y="3" width="3" height="2" fill="#dcdcf0"/><rect x="1" y="6" width="1" height="2" fill="#ffffff"/><rect x="3" y="6" width="3" height="2" fill="#eceaf0"/><rect x="7" y="6" width="3" height="2" fill="#e4e4f0"/><rect x="11" y="6" width="3" height="2" fill="#dcdcf0"/><rect x="1" y="9" width="1" height="2" fill="#ffffff"/><rect x="3" y="9" width="3" height="2" fill="#eceaf0"/><rect x="7" y="9" width="3" height="2" fill="#e4e4f0"/><rect x="11" y="9" width="3" height="2" fill="#dcdcf0"/></svg><div class="t" style="left:127.5px;top:394px;font-size:11px;color:#000;transform:scaleX(0.8993);transform-origin:0 0;">BIG_TABLE</div><svg class="a" style="left:91px;top:412px" width="9" height="9" viewBox="0 0 9 9"><rect x="0.5" y="0.5" width="8" height="8" rx="1.2" fill="url(#gb)" stroke="#8c8c88"/><rect x="2" y="4" width="5" height="1" fill="#000"/><rect x="4" y="2" width="1" height="5" fill="#000"/></svg><div class="a" style="left:100px;top:416px;width:8px;height:1px;background:repeating-linear-gradient(90deg,#7c7c7c 0 1px,transparent 1px 2px)"></div><svg class="a" style="left:108px;top:409px" width="16" height="13" viewBox="0 0 16 13" shape-rendering="crispEdges"><rect x="1" y="12" width="15" height="1" fill="#b0b0b8"/><rect x="15" y="1" width="1" height="12" fill="#b0b0b8"/><rect x="0" y="0" width="15" height="12" fill="#4a3c98"/><rect x="1" y="1" width="13" height="10" fill="#8290c0"/><rect x="1" y="1" width="1" height="1" fill="#fff"/><rect x="3" y="1" width="3" height="1" fill="#f4f4ff"/><rect x="7" y="1" width="3" height="1" fill="#f4f4ff"/><rect x="11" y="1" width="3" height="1" fill="#f4f4ff"/><rect x="1" y="3" width="1" height="2" fill="#ffffff"/><rect x="3" y="3" width="3" height="2" fill="#eceaf0"/><rect x="7" y="3" width="3" height="2" fill="#e4e4f0"/><rect x="11" y="3" width="3" height="2" fill="#dcdcf0"/><rect x="1" y="6" width="1" height="2" fill="#ffffff"/><rect x="3" y="6" width="3" height="2" fill="#eceaf0"/><rect x="7" y="6" width="3" height="2" fill="#e4e4f0"/><rect x="11" y="6" width="3" height="2" fill="#dcdcf0"/><rect x="1" y="9" width="1" height="2" fill="#ffffff"/><rect x="3" y="9" width="3" height="2" fill="#eceaf0"/><rect x="7" y="9" width="3" height="2" fill="#e4e4f0"/><rect x="11" y="9" width="3" height="2" fill="#dcdcf0"/></svg><div class="t" style="left:127.5px;top:411px;font-size:11px;color:#000;transform:scaleX(0.8839);transform-origin:0 0;">CAMPUSDIRECTORY</div><svg class="a" style="left:91px;top:429px" width="9" height="9" viewBox="0 0 9 9"><rect x="0.5" y="0.5" width="8" height="8" rx="1.2" fill="url(#gb)" stroke="#8c8c88"/><rect x="2" y="4" width="5" height="1" fill="#000"/><rect x="4" y="2" width="1" height="5" fill="#000"/></svg><div class="a" style="left:100px;top:433px;width:8px;height:1px;background:repeating-linear-gradient(90deg,#7c7c7c 0 1px,transparent 1px 2px)"></div><svg class="a" style="left:108px;top:426px" width="16" height="13" viewBox="0 0 16 13" shape-rendering="crispEdges"><rect x="1" y="12" width="15" height="1" fill="#b0b0b8"/><rect x="15" y="1" width="1" height="12" fill="#b0b0b8"/><rect x="0" y="0" width="15" height="12" fill="#4a3c98"/><rect x="1" y="1" width="13" height="10" fill="#8290c0"/><rect x="1" y="1" width="1" height="1" fill="#fff"/><rect x="3" y="1" width="3" height="1" fill="#f4f4ff"/><rect x="7" y="1" width="3" height="1" fill="#f4f4ff"/><rect x="11" y="1" width="3" height="1" fill="#f4f4ff"/><rect x="1" y="3" width="1" height="2" fill="#ffffff"/><rect x="3" y="3" width="3" height="2" fill="#eceaf0"/><rect x="7" y="3" width="3" height="2" fill="#e4e4f0"/><rect x="11" y="3" width="3" height="2" fill="#dcdcf0"/><rect x="1" y="6" width="1" height="2" fill="#ffffff"/><rect x="3" y="6" width="3" height="2" fill="#eceaf0"/><rect x="7" y="6" width="3" height="2" fill="#e4e4f0"/><rect x="11" y="6" width="3" height="2" fill="#dcdcf0"/><rect x="1" y="9" width="1" height="2" fill="#ffffff"/><rect x="3" y="9" width="3" height="2" fill="#eceaf0"/><rect x="7" y="9" width="3" height="2" fill="#e4e4f0"/><rect x="11" y="9" width="3" height="2" fill="#dcdcf0"/></svg><div class="t" style="left:127.5px;top:428px;font-size:11px;color:#000;transform:scaleX(0.9397);transform-origin:0 0;">CFA</div><svg class="a" style="left:91px;top:446px" width="9" height="9" viewBox="0 0 9 9"><rect x="0.5" y="0.5" width="8" height="8" rx="1.2" fill="url(#gb)" stroke="#8c8c88"/><rect x="2" y="4" width="5" height="1" fill="#000"/><rect x="4" y="2" width="1" height="5" fill="#000"/></svg><div class="a" style="left:100px;top:450px;width:8px;height:1px;background:repeating-linear-gradient(90deg,#7c7c7c 0 1px,transparent 1px 2px)"></div><svg class="a" style="left:108px;top:443px" width="16" height="13" viewBox="0 0 16 13" shape-rendering="crispEdges"><rect x="1" y="12" width="15" height="1" fill="#b0b0b8"/><rect x="15" y="1" width="1" height="12" fill="#b0b0b8"/><rect x="0" y="0" width="15" height="12" fill="#4a3c98"/><rect x="1" y="1" width="13" height="10" fill="#8290c0"/><rect x="1" y="1" width="1" height="1" fill="#fff"/><rect x="3" y="1" width="3" height="1" fill="#f4f4ff"/><rect x="7" y="1" width="3" height="1" fill="#f4f4ff"/><rect x="11" y="1" width="3" height="1" fill="#f4f4ff"/><rect x="1" y="3" width="1" height="2" fill="#ffffff"/><rect x="3" y="3" width="3" height="2" fill="#eceaf0"/><rect x="7" y="3" width="3" height="2" fill="#e4e4f0"/><rect x="11" y="3" width="3" height="2" fill="#dcdcf0"/><rect x="1" y="6" width="1" height="2" fill="#ffffff"/><rect x="3" y="6" width="3" height="2" fill="#eceaf0"/><rect x="7" y="6" width="3" height="2" fill="#e4e4f0"/><rect x="11" y="6" width="3" height="2" fill="#dcdcf0"/><rect x="1" y="9" width="1" height="2" fill="#ffffff"/><rect x="3" y="9" width="3" height="2" fill="#eceaf0"/><rect x="7" y="9" width="3" height="2" fill="#e4e4f0"/><rect x="11" y="9" width="3" height="2" fill="#dcdcf0"/></svg><div class="t" style="left:127.5px;top:445px;font-size:11px;color:#000;transform:scaleX(0.9008);transform-origin:0 0;">CFA_CATEGORY</div><svg class="a" style="left:91px;top:463px" width="9" height="9" viewBox="0 0 9 9"><rect x="0.5" y="0.5" width="8" height="8" rx="1.2" fill="url(#gb)" stroke="#8c8c88"/><rect x="2" y="4" width="5" height="1" fill="#000"/><rect x="4" y="2" width="1" height="5" fill="#000"/></svg><div class="a" style="left:100px;top:467px;width:8px;height:1px;background:repeating-linear-gradient(90deg,#7c7c7c 0 1px,transparent 1px 2px)"></div><svg class="a" style="left:108px;top:460px" width="16" height="13" viewBox="0 0 16 13" shape-rendering="crispEdges"><rect x="1" y="12" width="15" height="1" fill="#b0b0b8"/><rect x="15" y="1" width="1" height="12" fill="#b0b0b8"/><rect x="0" y="0" width="15" height="12" fill="#4a3c98"/><rect x="1" y="1" width="13" height="10" fill="#8290c0"/><rect x="1" y="1" width="1" height="1" fill="#fff"/><rect x="3" y="1" width="3" height="1" fill="#f4f4ff"/><rect x="7" y="1" width="3" height="1" fill="#f4f4ff"/><rect x="11" y="1" width="3" height="1" fill="#f4f4ff"/><rect x="1" y="3" width="1" height="2" fill="#ffffff"/><rect x="3" y="3" width="3" height="2" fill="#eceaf0"/><rect x="7" y="3" width="3" height="2" fill="#e4e4f0"/><rect x="11" y="3" width="3" height="2" fill="#dcdcf0"/><rect x="1" y="6" width="1" height="2" fill="#ffffff"/><rect x="3" y="6" width="3" height="2" fill="#eceaf0"/><rect x="7" y="6" width="3" height="2" fill="#e4e4f0"/><rect x="11" y="6" width="3" height="2" fill="#dcdcf0"/><rect x="1" y="9" width="1" height="2" fill="#ffffff"/><rect x="3" y="9" width="3" height="2" fill="#eceaf0"/><rect x="7" y="9" width="3" height="2" fill="#e4e4f0"/><rect x="11" y="9" width="3" height="2" fill="#dcdcf0"/></svg><div class="t" style="left:127.5px;top:462px;font-size:11px;color:#000;transform:scaleX(0.8896);transform-origin:0 0;">CFU</div><svg class="a" style="left:91px;top:480px" width="9" height="9" viewBox="0 0 9 9"><rect x="0.5" y="0.5" width="8" height="8" rx="1.2" fill="url(#gb)" stroke="#8c8c88"/><rect x="2" y="4" width="5" height="1" fill="#000"/><rect x="4" y="2" width="1" height="5" fill="#000"/></svg><div class="a" style="left:100px;top:484px;width:8px;height:1px;background:repeating-linear-gradient(90deg,#7c7c7c 0 1px,transparent 1px 2px)"></div><svg class="a" style="left:108px;top:477px" width="16" height="13" viewBox="0 0 16 13" shape-rendering="crispEdges"><rect x="1" y="12" width="15" height="1" fill="#b0b0b8"/><rect x="15" y="1" width="1" height="12" fill="#b0b0b8"/><rect x="0" y="0" width="15" height="12" fill="#4a3c98"/><rect x="1" y="1" width="13" height="10" fill="#8290c0"/><rect x="1" y="1" width="1" height="1" fill="#fff"/><rect x="3" y="1" width="3" height="1" fill="#f4f4ff"/><rect x="7" y="1" width="3" height="1" fill="#f4f4ff"/><rect x="11" y="1" width="3" height="1" fill="#f4f4ff"/><rect x="1" y="3" width="1" height="2" fill="#ffffff"/><rect x="3" y="3" width="3" height="2" fill="#eceaf0"/><rect x="7" y="3" width="3" height="2" fill="#e4e4f0"/><rect x="11" y="3" width="3" height="2" fill="#dcdcf0"/><rect x="1" y="6" width="1" height="2" fill="#ffffff"/><rect x="3" y="6" width="3" height="2" fill="#eceaf0"/><rect x="7" y="6" width="3" height="2" fill="#e4e4f0"/><rect x="11" y="6" width="3" height="2" fill="#dcdcf0"/><rect x="1" y="9" width="1" height="2" fill="#ffffff"/><rect x="3" y="9" width="3" height="2" fill="#eceaf0"/><rect x="7" y="9" width="3" height="2" fill="#e4e4f0"/><rect x="11" y="9" width="3" height="2" fill="#dcdcf0"/></svg><div class="t" style="left:127.5px;top:479px;font-size:11px;color:#000;transform:scaleX(0.8748);transform-origin:0 0;">CLOB_COPY_COPY</div><svg class="a" style="left:91px;top:497px" width="9" height="9" viewBox="0 0 9 9"><rect x="0.5" y="0.5" width="8" height="8" rx="1.2" fill="url(#gb)" stroke="#8c8c88"/><rect x="2" y="4" width="5" height="1" fill="#000"/><rect x="4" y="2" width="1" height="5" fill="#000"/></svg><div class="a" style="left:100px;top:501px;width:8px;height:1px;background:repeating-linear-gradient(90deg,#7c7c7c 0 1px,transparent 1px 2px)"></div><svg class="a" style="left:108px;top:494px" width="16" height="13" viewBox="0 0 16 13" shape-rendering="crispEdges"><rect x="1" y="12" width="15" height="1" fill="#b0b0b8"/><rect x="15" y="1" width="1" height="12" fill="#b0b0b8"/><rect x="0" y="0" width="15" height="12" fill="#4a3c98"/><rect x="1" y="1" width="13" height="10" fill="#8290c0"/><rect x="1" y="1" width="1" height="1" fill="#fff"/><rect x="3" y="1" width="3" height="1" fill="#f4f4ff"/><rect x="7" y="1" width="3" height="1" fill="#f4f4ff"/><rect x="11" y="1" width="3" height="1" fill="#f4f4ff"/><rect x="1" y="3" width="1" height="2" fill="#ffffff"/><rect x="3" y="3" width="3" height="2" fill="#eceaf0"/><rect x="7" y="3" width="3" height="2" fill="#e4e4f0"/><rect x="11" y="3" width="3" height="2" fill="#dcdcf0"/><rect x="1" y="6" width="1" height="2" fill="#ffffff"/><rect x="3" y="6" width="3" height="2" fill="#eceaf0"/><rect x="7" y="6" width="3" height="2" fill="#e4e4f0"/><rect x="11" y="6" width="3" height="2" fill="#dcdcf0"/><rect x="1" y="9" width="1" height="2" fill="#ffffff"/><rect x="3" y="9" width="3" height="2" fill="#eceaf0"/><rect x="7" y="9" width="3" height="2" fill="#e4e4f0"/><rect x="11" y="9" width="3" height="2" fill="#dcdcf0"/></svg><div class="t" style="left:127.5px;top:496px;font-size:11px;color:#000;transform:scaleX(0.8866);transform-origin:0 0;">CLOB_TABLE</div><svg class="a" style="left:91px;top:514px" width="9" height="9" viewBox="0 0 9 9"><rect x="0.5" y="0.5" width="8" height="8" rx="1.2" fill="url(#gb)" stroke="#8c8c88"/><rect x="2" y="4" width="5" height="1" fill="#000"/><rect x="4" y="2" width="1" height="5" fill="#000"/></svg><div class="a" style="left:100px;top:518px;width:8px;height:1px;background:repeating-linear-gradient(90deg,#7c7c7c 0 1px,transparent 1px 2px)"></div><svg class="a" style="left:108px;top:511px" width="16" height="13" viewBox="0 0 16 13" shape-rendering="crispEdges"><rect x="1" y="12" width="15" height="1" fill="#b0b0b8"/><rect x="15" y="1" width="1" height="12" fill="#b0b0b8"/><rect x="0" y="0" width="15" height="12" fill="#4a3c98"/><rect x="1" y="1" width="13" height="10" fill="#8290c0"/><rect x="1" y="1" width="1" height="1" fill="#fff"/><rect x="3" y="1" width="3" height="1" fill="#f4f4ff"/><rect x="7" y="1" width="3" height="1" fill="#f4f4ff"/><rect x="11" y="1" width="3" height="1" fill="#f4f4ff"/><rect x="1" y="3" width="1" height="2" fill="#ffffff"/><rect x="3" y="3" width="3" height="2" fill="#eceaf0"/><rect x="7" y="3" width="3" height="2" fill="#e4e4f0"/><rect x="11" y="3" width="3" height="2" fill="#dcdcf0"/><rect x="1" y="6" width="1" height="2" fill="#ffffff"/><rect x="3" y="6" width="3" height="2" fill="#eceaf0"/><rect x="7" y="6" width="3" height="2" fill="#e4e4f0"/><rect x="11" y="6" width="3" height="2" fill="#dcdcf0"/><rect x="1" y="9" width="1" height="2" fill="#ffffff"/><rect x="3" y="9" width="3" height="2" fill="#eceaf0"/><rect x="7" y="9" width="3" height="2" fill="#e4e4f0"/><rect x="11" y="9" width="3" height="2" fill="#dcdcf0"/></svg><div class="t" style="left:127.5px;top:513px;font-size:11px;color:#000;transform:scaleX(0.8793);transform-origin:0 0;">CLOB_TABLE_COPY</div><svg class="a" style="left:91px;top:531px" width="9" height="9" viewBox="0 0 9 9"><rect x="0.5" y="0.5" width="8" height="8" rx="1.2" fill="url(#gb)" stroke="#8c8c88"/><rect x="2" y="4" width="5" height="1" fill="#000"/><rect x="4" y="2" width="1" height="5" fill="#000"/></svg><div class="a" style="left:100px;top:535px;width:8px;height:1px;background:repeating-linear-gradient(90deg,#7c7c7c 0 1px,transparent 1px 2px)"></div><svg class="a" style="left:108px;top:528px" width="16" height="13" viewBox="0 0 16 13" shape-rendering="crispEdges"><rect x="1" y="12" width="15" height="1" fill="#b0b0b8"/><rect x="15" y="1" width="1" height="12" fill="#b0b0b8"/><rect x="0" y="0" width="15" height="12" fill="#4a3c98"/><rect x="1" y="1" width="13" height="10" fill="#8290c0"/><rect x="1" y="1" width="1" height="1" fill="#fff"/><rect x="3" y="1" width="3" height="1" fill="#f4f4ff"/><rect x="7" y="1" width="3" height="1" fill="#f4f4ff"/><rect x="11" y="1" width="3" height="1" fill="#f4f4ff"/><rect x="1" y="3" width="1" height="2" fill="#ffffff"/><rect x="3" y="3" width="3" height="2" fill="#eceaf0"/><rect x="7" y="3" width="3" height="2" fill="#e4e4f0"/><rect x="11" y="3" width="3" height="2" fill="#dcdcf0"/><rect x="1" y="6" width="1" height="2" fill="#ffffff"/><rect x="3" y="6" width="3" height="2" fill="#eceaf0"/><rect x="7" y="6" width="3" height="2" fill="#e4e4f0"/><rect x="11" y="6" width="3" height="2" fill="#dcdcf0"/><rect x="1" y="9" width="1" height="2" fill="#ffffff"/><rect x="3" y="9" width="3" height="2" fill="#eceaf0"/><rect x="7" y="9" width="3" height="2" fill="#e4e4f0"/><rect x="11" y="9" width="3" height="2" fill="#dcdcf0"/></svg><div class="t" style="left:127.5px;top:530px;font-size:11px;color:#000;transform:scaleX(0.8792);transform-origin:0 0;">COLA_MARKETS</div><svg class="a" style="left:91px;top:548px" width="9" height="9" viewBox="0 0 9 9"><rect x="0.5" y="0.5" width="8" height="8" rx="1.2" fill="url(#gb)" stroke="#8c8c88"/><rect x="2" y="4" width="5" height="1" fill="#000"/><rect x="4" y="2" width="1" height="5" fill="#000"/></svg><div class="a" style="left:100px;top:552px;width:8px;height:1px;background:repeating-linear-gradient(90deg,#7c7c7c 0 1px,transparent 1px 2px)"></div><svg class="a" style="left:108px;top:545px" width="17" height="14" viewBox="0 0 17 14"><g shape-rendering="crispEdges"><rect x="7" y="1" width="10" height="12" fill="#b0b0b8"/><rect x="6" y="0" width="10" height="12" fill="#4a3c98"/><rect x="7" y="1" width="8" height="10" fill="#8492c4"/><rect x="8" y="1" width="3" height="1" fill="#f4f4ff"/><rect x="12" y="1" width="3" height="1" fill="#f4f4ff"/><rect x="8" y="3" width="3" height="2" fill="#eceaf0"/><rect x="12" y="3" width="3" height="2" fill="#dcdcf0"/><rect x="8" y="6" width="3" height="2" fill="#eceaf0"/><rect x="12" y="6" width="3" height="2" fill="#dcdcf0"/><rect x="8" y="9" width="3" height="2" fill="#eceaf0"/><rect x="12" y="9" width="3" height="2" fill="#dcdcf0"/></g><path d="M6.5 0.5 L1 6.5 L6.5 12 M1 6.5 h6" stroke="#101018" stroke-width="1.4" fill="none"/></svg><div class="t" style="left:127.5px;top:547px;font-size:11px;color:#000;transform:scaleX(0.8922);transform-origin:0 0;">COUNTRIES</div><svg class="a" style="left:91px;top:565px" width="9" height="9" viewBox="0 0 9 9"><rect x="0.5" y="0.5" width="8" height="8" rx="1.2" fill="url(#gb)" stroke="#8c8c88"/><rect x="2" y="4" width="5" height="1" fill="#000"/><rect x="4" y="2" width="1" height="5" fill="#000"/></svg><div class="a" style="left:100px;top:569px;width:8px;height:1px;background:repeating-linear-gradient(90deg,#7c7c7c 0 1px,transparent 1px 2px)"></div><svg class="a" style="left:108px;top:562px" width="16" height="13" viewBox="0 0 16 13" shape-rendering="crispEdges"><rect x="1" y="12" width="15" height="1" fill="#b0b0b8"/><rect x="15" y="1" width="1" height="12" fill="#b0b0b8"/><rect x="0" y="0" width="15" height="12" fill="#4a3c98"/><rect x="1" y="1" width="13" height="10" fill="#8290c0"/><rect x="1" y="1" width="1" height="1" fill="#fff"/><rect x="3" y="1" width="3" height="1" fill="#f4f4ff"/><rect x="7" y="1" width="3" height="1" fill="#f4f4ff"/><rect x="11" y="1" width="3" height="1" fill="#f4f4ff"/><rect x="1" y="3" width="1" height="2" fill="#ffffff"/><rect x="3" y="3" width="3" height="2" fill="#eceaf0"/><rect x="7" y="3" width="3" height="2" fill="#e4e4f0"/><rect x="11" y="3" width="3" height="2" fill="#dcdcf0"/><rect x="1" y="6" width="1" height="2" fill="#ffffff"/><rect x="3" y="6" width="3" height="2" fill="#eceaf0"/><rect x="7" y="6" width="3" height="2" fill="#e4e4f0"/><rect x="11" y="6" width="3" height="2" fill="#dcdcf0"/><rect x="1" y="9" width="1" height="2" fill="#ffffff"/><rect x="3" y="9" width="3" height="2" fill="#eceaf0"/><rect x="7" y="9" width="3" height="2" fill="#e4e4f0"/><rect x="11" y="9" width="3" height="2" fill="#dcdcf0"/></svg><div class="t" style="left:127.5px;top:564px;font-size:11px;color:#000;transform:scaleX(0.8827);transform-origin:0 0;">CUSTOMER_QUOTES</div><svg class="a" style="left:91px;top:582px" width="9" height="9" viewBox="0 0 9 9"><rect x="0.5" y="0.5" width="8" height="8" rx="1.2" fill="url(#gb)" stroke="#8c8c88"/><rect x="2" y="4" width="5" height="1" fill="#000"/><rect x="4" y="2" width="1" height="5" fill="#000"/></svg><div class="a" style="left:100px;top:586px;width:8px;height:1px;background:repeating-linear-gradient(90deg,#7c7c7c 0 1px,transparent 1px 2px)"></div><svg class="a" style="left:108px;top:579px" width="16" height="13" viewBox="0 0 16 13" shape-rendering="crispEdges"><rect x="1" y="12" width="15" height="1" fill="#b0b0b8"/><rect x="15" y="1" width="1" height="12" fill="#b0b0b8"/><rect x="0" y="0" width="15" height="12" fill="#4a3c98"/><rect x="1" y="1" width="13" height="10" fill="#8290c0"/><rect x="1" y="1" width="1" height="1" fill="#fff"/><rect x="3" y="1" width="3" height="1" fill="#f4f4ff"/><rect x="7" y="1" width="3" height="1" fill="#f4f4ff"/><rect x="11" y="1" width="3" height="1" fill="#f4f4ff"/><rect x="1" y="3" width="1" height="2" fill="#ffffff"/><rect x="3" y="3" width="3" height="2" fill="#eceaf0"/><rect x="7" y="3" width="3" height="2" fill="#e4e4f0"/><rect x="11" y="3" width="3" height="2" fill="#dcdcf0"/><rect x="1" y="6" width="1" height="2" fill="#ffffff"/><rect x="3" y="6" width="3" height="2" fill="#eceaf0"/><rect x="7" y="6" width="3" height="2" fill="#e4e4f0"/><rect x="11" y="6" width="3" height="2" fill="#dcdcf0"/><rect x="1" y="9" width="1" height="2" fill="#ffffff"/><rect x="3" y="9" width="3" height="2" fill="#eceaf0"/><rect x="7" y="9" width="3" height="2" fill="#e4e4f0"/><rect x="11" y="9" width="3" height="2" fill="#dcdcf0"/></svg><div class="t" style="left:127.5px;top:581px;font-size:11px;color:#000;transform:scaleX(0.9076);transform-origin:0 0;">DEMO_CITIES</div><svg class="a" style="left:91px;top:599px" width="9" height="9" viewBox="0 0 9 9"><rect x="0.5" y="0.5" width="8" height="8" rx="1.2" fill="url(#gb)" stroke="#8c8c88"/><rect x="2" y="4" width="5" height="1" fill="#000"/><rect x="4" y="2" width="1" height="5" fill="#000"/></svg><div class="a" style="left:100px;top:603px;width:8px;height:1px;background:repeating-linear-gradient(90deg,#7c7c7c 0 1px,transparent 1px 2px)"></div><svg class="a" style="left:108px;top:596px" width="16" height="13" viewBox="0 0 16 13" shape-rendering="crispEdges"><rect x="1" y="12" width="15" height="1" fill="#b0b0b8"/><rect x="15" y="1" width="1" height="12" fill="#b0b0b8"/><rect x="0" y="0" width="15" height="12" fill="#4a3c98"/><rect x="1" y="1" width="13" height="10" fill="#8290c0"/><rect x="1" y="1" width="1" height="1" fill="#fff"/><rect x="3" y="1" width="3" height="1" fill="#f4f4ff"/><rect x="7" y="1" width="3" height="1" fill="#f4f4ff"/><rect x="11" y="1" width="3" height="1" fill="#f4f4ff"/><rect x="1" y="3" width="1" height="2" fill="#ffffff"/><rect x="3" y="3" width="3" height="2" fill="#eceaf0"/><rect x="7" y="3" width="3" height="2" fill="#e4e4f0"/><rect x="11" y="3" width="3" height="2" fill="#dcdcf0"/><rect x="1" y="6" width="1" height="2" fill="#ffffff"/><rect x="3" y="6" width="3" height="2" fill="#eceaf0"/><rect x="7" y="6" width="3" height="2" fill="#e4e4f0"/><rect x="11" y="6" width="3" height="2" fill="#dcdcf0"/><rect x="1" y="9" width="1" height="2" fill="#ffffff"/><rect x="3" y="9" width="3" height="2" fill="#eceaf0"/><rect x="7" y="9" width="3" height="2" fill="#e4e4f0"/><rect x="11" y="9" width="3" height="2" fill="#dcdcf0"/></svg><div class="t" style="left:127.5px;top:598px;font-size:11px;color:#000;transform:scaleX(0.8888);transform-origin:0 0;">DEMO_COUNTIES</div><svg class="a" style="left:91px;top:616px" width="9" height="9" viewBox="0 0 9 9"><rect x="0.5" y="0.5" width="8" height="8" rx="1.2" fill="url(#gb)" stroke="#8c8c88"/><rect x="2" y="4" width="5" height="1" fill="#000"/><rect x="4" y="2" width="1" height="5" fill="#000"/></svg><div class="a" style="left:100px;top:620px;width:8px;height:1px;background:repeating-linear-gradient(90deg,#7c7c7c 0 1px,transparent 1px 2px)"></div><svg class="a" style="left:108px;top:613px" width="16" height="13" viewBox="0 0 16 13" shape-rendering="crispEdges"><rect x="1" y="12" width="15" height="1" fill="#b0b0b8"/><rect x="15" y="1" width="1" height="12" fill="#b0b0b8"/><rect x="0" y="0" width="15" height="12" fill="#4a3c98"/><rect x="1" y="1" width="13" height="10" fill="#8290c0"/><rect x="1" y="1" width="1" height="1" fill="#fff"/><rect x="3" y="1" width="3" height="1" fill="#f4f4ff"/><rect x="7" y="1" width="3" height="1" fill="#f4f4ff"/><rect x="11" y="1" width="3" height="1" fill="#f4f4ff"/><rect x="1" y="3" width="1" height="2" fill="#ffffff"/><rect x="3" y="3" width="3" height="2" fill="#eceaf0"/><rect x="7" y="3" width="3" height="2" fill="#e4e4f0"/><rect x="11" y="3" width="3" height="2" fill="#dcdcf0"/><rect x="1" y="6" width="1" height="2" fill="#ffffff"/><rect x="3" y="6" width="3" height="2" fill="#eceaf0"/><rect x="7" y="6" width="3" height="2" fill="#e4e4f0"/><rect x="11" y="6" width="3" height="2" fill="#dcdcf0"/><rect x="1" y="9" width="1" height="2" fill="#ffffff"/><rect x="3" y="9" width="3" height="2" fill="#eceaf0"/><rect x="7" y="9" width="3" height="2" fill="#e4e4f0"/><rect x="11" y="9" width="3" height="2" fill="#dcdcf0"/></svg><div class="t" style="left:127.5px;top:615px;font-size:11px;color:#000;transform:scaleX(0.8890);transform-origin:0 0;">DEMO_STATES</div><svg class="a" style="left:91px;top:633px" width="9" height="9" viewBox="0 0 9 9"><rect x="0.5" y="0.5" width="8" height="8" rx="1.2" fill="url(#gb)" stroke="#8c8c88"/><rect x="2" y="4" width="5" height="1" fill="#000"/><rect x="4" y="2" width="1" height="5" fill="#000"/></svg><div class="a" style="left:100px;top:637px;width:8px;height:1px;background:repeating-linear-gradient(90deg,#7c7c7c 0 1px,transparent 1px 2px)"></div><svg class="a" style="left:108px;top:630px" width="16" height="13" viewBox="0 0 16 13" shape-rendering="crispEdges"><rect x="1" y="12" width="15" height="1" fill="#b0b0b8"/><rect x="15" y="1" width="1" height="12" fill="#b0b0b8"/><rect x="0" y="0" width="15" height="12" fill="#4a3c98"/><rect x="1" y="1" width="13" height="10" fill="#8290c0"/><rect x="1" y="1" width="1" height="1" fill="#fff"/><rect x="3" y="1" width="3" height="1" fill="#f4f4ff"/><rect x="7" y="1" width="3" height="1" fill="#f4f4ff"/><rect x="11" y="1" width="3" height="1" fill="#f4f4ff"/><rect x="1" y="3" width="1" height="2" fill="#ffffff"/><rect x="3" y="3" width="3" height="2" fill="#eceaf0"/><rect x="7" y="3" width="3" height="2" fill="#e4e4f0"/><rect x="11" y="3" width="3" height="2" fill="#dcdcf0"/><rect x="1" y="6" width="1" height="2" fill="#ffffff"/><rect x="3" y="6" width="3" height="2" fill="#eceaf0"/><rect x="7" y="6" width="3" height="2" fill="#e4e4f0"/><rect x="11" y="6" width="3" height="2" fill="#dcdcf0"/><rect x="1" y="9" width="1" height="2" fill="#ffffff"/><rect x="3" y="9" width="3" height="2" fill="#eceaf0"/><rect x="7" y="9" width="3" height="2" fill="#e4e4f0"/><rect x="11" y="9" width="3" height="2" fill="#dcdcf0"/></svg><div class="t" style="left:127.5px;top:632px;font-size:11px;color:#000;transform:scaleX(0.9173);transform-origin:0 0;">DEMO_TAB1</div><svg class="a" style="left:91px;top:650px" width="9" height="9" viewBox="0 0 9 9"><rect x="0.5" y="0.5" width="8" height="8" rx="1.2" fill="url(#gb)" stroke="#8c8c88"/><rect x="2" y="4" width="5" height="1" fill="#000"/><rect x="4" y="2" width="1" height="5" fill="#000"/></svg><div class="a" style="left:100px;top:654px;width:8px;height:1px;background:repeating-linear-gradient(90deg,#7c7c7c 0 1px,transparent 1px 2px)"></div><svg class="a" style="left:108px;top:647px" width="16" height="13" viewBox="0 0 16 13" shape-rendering="crispEdges"><rect x="1" y="12" width="15" height="1" fill="#b0b0b8"/><rect x="15" y="1" width="1" height="12" fill="#b0b0b8"/><rect x="0" y="0" width="15" height="12" fill="#4a3c98"/><rect x="1" y="1" width="13" height="10" fill="#8290c0"/><rect x="1" y="1" width="1" height="1" fill="#fff"/><rect x="3" y="1" width="3" height="1" fill="#f4f4ff"/><rect x="7" y="1" width="3" height="1" fill="#f4f4ff"/><rect x="11" y="1" width="3" height="1" fill="#f4f4ff"/><rect x="1" y="3" width="1" height="2" fill="#ffffff"/><rect x="3" y="3" width="3" height="2" fill="#eceaf0"/><rect x="7" y="3" width="3" height="2" fill="#e4e4f0"/><rect x="11" y="3" width="3" height="2" fill="#dcdcf0"/><rect x="1" y="6" width="1" height="2" fill="#ffffff"/><rect x="3" y="6" width="3" height="2" fill="#eceaf0"/><rect x="7" y="6" width="3" height="2" fill="#e4e4f0"/><rect x="11" y="6" width="3" height="2" fill="#dcdcf0"/><rect x="1" y="9" width="1" height="2" fill="#ffffff"/><rect x="3" y="9" width="3" height="2" fill="#eceaf0"/><rect x="7" y="9" width="3" height="2" fill="#e4e4f0"/><rect x="11" y="9" width="3" height="2" fill="#dcdcf0"/></svg><div class="t" style="left:127.5px;top:649px;font-size:11px;color:#000;transform:scaleX(0.8696);transform-origin:0 0;">DEPARTMENTS</div><svg class="a" style="left:91px;top:667px" width="9" height="9" viewBox="0 0 9 9"><rect x="0.5" y="0.5" width="8" height="8" rx="1.2" fill="url(#gb)" stroke="#8c8c88"/><rect x="2" y="4" width="5" height="1" fill="#000"/><rect x="4" y="2" width="1" height="5" fill="#000"/></svg><div class="a" style="left:100px;top:671px;width:8px;height:1px;background:repeating-linear-gradient(90deg,#7c7c7c 0 1px,transparent 1px 2px)"></div><svg class="a" style="left:108px;top:664px" width="16" height="13" viewBox="0 0 16 13" shape-rendering="crispEdges"><rect x="1" y="12" width="15" height="1" fill="#b0b0b8"/><rect x="15" y="1" width="1" height="12" fill="#b0b0b8"/><rect x="0" y="0" width="15" height="12" fill="#4a3c98"/><rect x="1" y="1" width="13" height="10" fill="#8290c0"/><rect x="1" y="1" width="1" height="1" fill="#fff"/><rect x="3" y="1" width="3" height="1" fill="#f4f4ff"/><rect x="7" y="1" width="3" height="1" fill="#f4f4ff"/><rect x="11" y="1" width="3" height="1" fill="#f4f4ff"/><rect x="1" y="3" width="1" height="2" fill="#ffffff"/><rect x="3" y="3" width="3" height="2" fill="#eceaf0"/><rect x="7" y="3" width="3" height="2" fill="#e4e4f0"/><rect x="11" y="3" width="3" height="2" fill="#dcdcf0"/><rect x="1" y="6" width="1" height="2" fill="#ffffff"/><rect x="3" y="6" width="3" height="2" fill="#eceaf0"/><rect x="7" y="6" width="3" height="2" fill="#e4e4f0"/><rect x="11" y="6" width="3" height="2" fill="#dcdcf0"/><rect x="1" y="9" width="1" height="2" fill="#ffffff"/><rect x="3" y="9" width="3" height="2" fill="#eceaf0"/><rect x="7" y="9" width="3" height="2" fill="#e4e4f0"/><rect x="11" y="9" width="3" height="2" fill="#dcdcf0"/></svg><div class="t" style="left:127.5px;top:666px;font-size:11px;color:#000;transform:scaleX(0.9121);transform-origin:0 0;">DONT_DO_THIS</div><svg class="a" style="left:91px;top:684px" width="9" height="9" viewBox="0 0 9 9"><rect x="0.5" y="0.5" width="8" height="8" rx="1.2" fill="url(#gb)" stroke="#8c8c88"/><rect x="2" y="4" width="5" height="1" fill="#000"/><rect x="4" y="2" width="1" height="5" fill="#000"/></svg><div class="a" style="left:100px;top:688px;width:8px;height:1px;background:repeating-linear-gradient(90deg,#7c7c7c 0 1px,transparent 1px 2px)"></div><svg class="a" style="left:108px;top:681px" width="16" height="13" viewBox="0 0 16 13" shape-rendering="crispEdges"><rect x="1" y="12" width="15" height="1" fill="#b0b0b8"/><rect x="15" y="1" width="1" height="12" fill="#b0b0b8"/><rect x="0" y="0" width="15" height="12" fill="#4a3c98"/><rect x="1" y="1" width="13" height="10" fill="#8290c0"/><rect x="1" y="1" width="1" height="1" fill="#fff"/><rect x="3" y="1" width="3" height="1" fill="#f4f4ff"/><rect x="7" y="1" width="3" height="1" fill="#f4f4ff"/><rect x="11" y="1" width="3" height="1" fill="#f4f4ff"/><rect x="1" y="3" width="1" height="2" fill="#ffffff"/><rect x="3" y="3" width="3" height="2" fill="#eceaf0"/><rect x="7" y="3" width="3" height="2" fill="#e4e4f0"/><rect x="11" y="3" width="3" height="2" fill="#dcdcf0"/><rect x="1" y="6" width="1" height="2" fill="#ffffff"/><rect x="3" y="6" width="3" height="2" fill="#eceaf0"/><rect x="7" y="6" width="3" height="2" fill="#e4e4f0"/><rect x="11" y="6" width="3" height="2" fill="#dcdcf0"/><rect x="1" y="9" width="1" height="2" fill="#ffffff"/><rect x="3" y="9" width="3" height="2" fill="#eceaf0"/><rect x="7" y="9" width="3" height="2" fill="#e4e4f0"/><rect x="11" y="9" width="3" height="2" fill="#dcdcf0"/></svg><div class="t" style="left:127.5px;top:683px;font-size:11px;color:#000;transform:scaleX(0.8935);transform-origin:0 0;">DOT_COLUMN</div><svg class="a" style="left:91px;top:701px" width="9" height="9" viewBox="0 0 9 9"><rect x="0.5" y="0.5" width="8" height="8" rx="1.2" fill="url(#gb)" stroke="#8c8c88"/><rect x="2" y="4" width="5" height="1" fill="#000"/><rect x="4" y="2" width="1" height="5" fill="#000"/></svg><div class="a" style="left:100px;top:705px;width:8px;height:1px;background:repeating-linear-gradient(90deg,#7c7c7c 0 1px,transparent 1px 2px)"></div><svg class="a" style="left:108px;top:698px" width="16" height="13" viewBox="0 0 16 13" shape-rendering="crispEdges"><rect x="1" y="12" width="15" height="1" fill="#b0b0b8"/><rect x="15" y="1" width="1" height="12" fill="#b0b0b8"/><rect x="0" y="0" width="15" height="12" fill="#4a3c98"/><rect x="1" y="1" width="13" height="10" fill="#8290c0"/><rect x="1" y="1" width="1" height="1" fill="#fff"/><rect x="3" y="1" width="3" height="1" fill="#f4f4ff"/><rect x="7" y="1" width="3" height="1" fill="#f4f4ff"/><rect x="11" y="1" width="3" height="1" fill="#f4f4ff"/><rect x="1" y="3" width="1" height="2" fill="#ffffff"/><rect x="3" y="3" width="3" height="2" fill="#eceaf0"/><rect x="7" y="3" width="3" height="2" fill="#e4e4f0"/><rect x="11" y="3" width="3" height="2" fill="#dcdcf0"/><rect x="1" y="6" width="1" height="2" fill="#ffffff"/><rect x="3" y="6" width="3" height="2" fill="#eceaf0"/><rect x="7" y="6" width="3" height="2" fill="#e4e4f0"/><rect x="11" y="6" width="3" height="2" fill="#dcdcf0"/><rect x="1" y="9" width="1" height="2" fill="#ffffff"/><rect x="3" y="9" width="3" height="2" fill="#eceaf0"/><rect x="7" y="9" width="3" height="2" fill="#e4e4f0"/><rect x="11" y="9" width="3" height="2" fill="#dcdcf0"/></svg><div class="t" style="left:127.5px;top:700px;font-size:11px;color:#000;transform:scaleX(0.8703);transform-origin:0 0;">DUMMY_OTBL</div><svg class="a" style="left:91px;top:718px" width="9" height="9" viewBox="0 0 9 9"><rect x="0.5" y="0.5" width="8" height="8" rx="1.2" fill="url(#gb)" stroke="#8c8c88"/><rect x="2" y="4" width="5" height="1" fill="#000"/><rect x="4" y="2" width="1" height="5" fill="#000"/></svg><div class="a" style="left:100px;top:722px;width:8px;height:1px;background:repeating-linear-gradient(90deg,#7c7c7c 0 1px,transparent 1px 2px)"></div><svg class="a" style="left:108px;top:715px" width="16" height="13" viewBox="0 0 16 13" shape-rendering="crispEdges"><rect x="1" y="12" width="15" height="1" fill="#b0b0b8"/><rect x="15" y="1" width="1" height="12" fill="#b0b0b8"/><rect x="0" y="0" width="15" height="12" fill="#4a3c98"/><rect x="1" y="1" width="13" height="10" fill="#8290c0"/><rect x="1" y="1" width="1" height="1" fill="#fff"/><rect x="3" y="1" width="3" height="1" fill="#f4f4ff"/><rect x="7" y="1" width="3" height="1" fill="#f4f4ff"/><rect x="11" y="1" width="3" height="1" fill="#f4f4ff"/><rect x="1" y="3" width="1" height="2" fill="#ffffff"/><rect x="3" y="3" width="3" height="2" fill="#eceaf0"/><rect x="7" y="3" width="3" height="2" fill="#e4e4f0"/><rect x="11" y="3" width="3" height="2" fill="#dcdcf0"/><rect x="1" y="6" width="1" height="2" fill="#ffffff"/><rect x="3" y="6" width="3" height="2" fill="#eceaf0"/><rect x="7" y="6" width="3" height="2" fill="#e4e4f0"/><rect x="11" y="6" width="3" height="2" fill="#dcdcf0"/><rect x="1" y="9" width="1" height="2" fill="#ffffff"/><rect x="3" y="9" width="3" height="2" fill="#eceaf0"/><rect x="7" y="9" width="3" height="2" fill="#e4e4f0"/><rect x="11" y="9" width="3" height="2" fill="#dcdcf0"/></svg><div class="t" style="left:127.5px;top:717px;font-size:11px;color:#000;transform:scaleX(0.8973);transform-origin:0 0;">EMP$AWARD_BONUS</div><svg class="a" style="left:91px;top:735px" width="9" height="9" viewBox="0 0 9 9"><rect x="0.5" y="0.5" width="8" height="8" rx="1.2" fill="url(#gb)" stroke="#8c8c88"/><rect x="2" y="4" width="5" height="1" fill="#000"/><rect x="4" y="2" width="1" height="5" fill="#000"/></svg><div class="a" style="left:100px;top:739px;width:8px;height:1px;background:repeating-linear-gradient(90deg,#7c7c7c 0 1px,transparent 1px 2px)"></div><svg class="a" style="left:108px;top:732px" width="16" height="13" viewBox="0 0 16 13" shape-rendering="crispEdges"><rect x="1" y="12" width="15" height="1" fill="#b0b0b8"/><rect x="15" y="1" width="1" height="12" fill="#b0b0b8"/><rect x="0" y="0" width="15" height="12" fill="#4a3c98"/><rect x="1" y="1" width="13" height="10" fill="#8290c0"/><rect x="1" y="1" width="1" height="1" fill="#fff"/><rect x="3" y="1" width="3" height="1" fill="#f4f4ff"/><rect x="7" y="1" width="3" height="1" fill="#f4f4ff"/><rect x="11" y="1" width="3" height="1" fill="#f4f4ff"/><rect x="1" y="3" width="1" height="2" fill="#ffffff"/><rect x="3" y="3" width="3" height="2" fill="#eceaf0"/><rect x="7" y="3" width="3" height="2" fill="#e4e4f0"/><rect x="11" y="3" width="3" height="2" fill="#dcdcf0"/><rect x="1" y="6" width="1" height="2" fill="#ffffff"/><rect x="3" y="6" width="3" height="2" fill="#eceaf0"/><rect x="7" y="6" width="3" height="2" fill="#e4e4f0"/><rect x="11" y="6" width="3" height="2" fill="#dcdcf0"/><rect x="1" y="9" width="1" height="2" fill="#ffffff"/><rect x="3" y="9" width="3" height="2" fill="#eceaf0"/><rect x="7" y="9" width="3" height="2" fill="#e4e4f0"/><rect x="11" y="9" width="3" height="2" fill="#dcdcf0"/></svg><div class="t" style="left:127.5px;top:734px;font-size:11px;color:#000;transform:scaleX(0.8350);transform-origin:0 0;">EMPLOYEES</div><svg class="a" style="left:91px;top:752px" width="9" height="9" viewBox="0 0 9 9"><rect x="0.5" y="0.5" width="8" height="8" rx="1.2" fill="url(#gb)" stroke="#8c8c88"/><rect x="2" y="4" width="5" height="1" fill="#000"/><rect x="4" y="2" width="1" height="5" fill="#000"/></svg><div class="a" style="left:100px;top:756px;width:8px;height:1px;background:repeating-linear-gradient(90deg,#7c7c7c 0 1px,transparent 1px 2px)"></div><svg class="a" style="left:108px;top:749px" width="16" height="13" viewBox="0 0 16 13" shape-rendering="crispEdges"><rect x="1" y="12" width="15" height="1" fill="#b0b0b8"/><rect x="15" y="1" width="1" height="12" fill="#b0b0b8"/><rect x="0" y="0" width="15" height="12" fill="#4a3c98"/><rect x="1" y="1" width="13" height="10" fill="#8290c0"/><rect x="1" y="1" width="1" height="1" fill="#fff"/><rect x="3" y="1" width="3" height="1" fill="#f4f4ff"/><rect x="7" y="1" width="3" height="1" fill="#f4f4ff"/><rect x="11" y="1" width="3" height="1" fill="#f4f4ff"/><rect x="1" y="3" width="1" height="2" fill="#ffffff"/><rect x="3" y="3" width="3" height="2" fill="#eceaf0"/><rect x="7" y="3" width="3" height="2" fill="#e4e4f0"/><rect x="11" y="3" width="3" height="2" fill="#dcdcf0"/><rect x="1" y="6" width="1" height="2" fill="#ffffff"/><rect x="3" y="6" width="3" height="2" fill="#eceaf0"/><rect x="7" y="6" width="3" height="2" fill="#e4e4f0"/><rect x="11" y="6" width="3" height="2" fill="#dcdcf0"/><rect x="1" y="9" width="1" height="2" fill="#ffffff"/><rect x="3" y="9" width="3" height="2" fill="#eceaf0"/><rect x="7" y="9" width="3" height="2" fill="#e4e4f0"/><rect x="11" y="9" width="3" height="2" fill="#dcdcf0"/></svg><div class="t" style="left:127.5px;top:751px;font-size:11px;color:#000;transform:scaleX(0.8549);transform-origin:0 0;">EMPLOYEES_DEMO</div><svg class="a" style="left:91px;top:769px" width="9" height="9" viewBox="0 0 9 9"><rect x="0.5" y="0.5" width="8" height="8" rx="1.2" fill="url(#gb)" stroke="#8c8c88"/><rect x="2" y="4" width="5" height="1" fill="#000"/><rect x="4" y="2" width="1" height="5" fill="#000"/></svg><div class="a" style="left:100px;top:773px;width:8px;height:1px;background:repeating-linear-gradient(90deg,#7c7c7c 0 1px,transparent 1px 2px)"></div><svg class="a" style="left:108px;top:766px" width="16" height="13" viewBox="0 0 16 13" shape-rendering="crispEdges"><rect x="1" y="12" width="15" height="1" fill="#b0b0b8"/><rect x="15" y="1" width="1" height="12" fill="#b0b0b8"/><rect x="0" y="0" width="15" height="12" fill="#4a3c98"/><rect x="1" y="1" width="13" height="10" fill="#8290c0"/><rect x="1" y="1" width="1" height="1" fill="#fff"/><rect x="3" y="1" width="3" height="1" fill="#f4f4ff"/><rect x="7" y="1" width="3" height="1" fill="#f4f4ff"/><rect x="11" y="1" width="3" height="1" fill="#f4f4ff"/><rect x="1" y="3" width="1" height="2" fill="#ffffff"/><rect x="3" y="3" width="3" height="2" fill="#eceaf0"/><rect x="7" y="3" width="3" height="2" fill="#e4e4f0"/><rect x="11" y="3" width="3" height="2" fill="#dcdcf0"/><rect x="1" y="6" width="1" height="2" fill="#ffffff"/><rect x="3" y="6" width="3" height="2" fill="#eceaf0"/><rect x="7" y="6" width="3" height="2" fill="#e4e4f0"/><rect x="11" y="6" width="3" height="2" fill="#dcdcf0"/><rect x="1" y="9" width="1" height="2" fill="#ffffff"/><rect x="3" y="9" width="3" height="2" fill="#eceaf0"/><rect x="7" y="9" width="3" height="2" fill="#e4e4f0"/><rect x="11" y="9" width="3" height="2" fill="#dcdcf0"/></svg><div class="t" style="left:127.5px;top:768px;font-size:11px;color:#000;transform:scaleX(0.8749);transform-origin:0 0;">EMPLOYEES_NO_ROWS</div><svg class="a" style="left:91px;top:786px" width="9" height="9" viewBox="0 0 9 9"><rect x="0.5" y="0.5" width="8" height="8" rx="1.2" fill="url(#gb)" stroke="#8c8c88"/><rect x="2" y="4" width="5" height="1" fill="#000"/><rect x="4" y="2" width="1" height="5" fill="#000"/></svg><div class="a" style="left:100px;top:790px;width:8px;height:1px;background:repeating-linear-gradient(90deg,#7c7c7c 0 1px,transparent 1px 2px)"></div><svg class="a" style="left:108px;top:783px" width="16" height="13" viewBox="0 0 16 13" shape-rendering="crispEdges"><rect x="1" y="12" width="15" height="1" fill="#b0b0b8"/><rect x="15" y="1" width="1" height="12" fill="#b0b0b8"/><rect x="0" y="0" width="15" height="12" fill="#4a3c98"/><rect x="1" y="1" width="13" height="10" fill="#8290c0"/><rect x="1" y="1" width="1" height="1" fill="#fff"/><rect x="3" y="1" width="3" height="1" fill="#f4f4ff"/><rect x="7" y="1" width="3" height="1" fill="#f4f4ff"/><rect x="11" y="1" width="3" height="1" fill="#f4f4ff"/><rect x="1" y="3" width="1" height="2" fill="#ffffff"/><rect x="3" y="3" width="3" height="2" fill="#eceaf0"/><rect x="7" y="3" width="3" height="2" fill="#e4e4f0"/><rect x="11" y="3" width="3" height="2" fill="#dcdcf0"/><rect x="1" y="6" width="1" height="2" fill="#ffffff"/><rect x="3" y="6" width="3" height="2" fill="#eceaf0"/><rect x="7" y="6" width="3" height="2" fill="#e4e4f0"/><rect x="11" y="6" width="3" height="2" fill="#dcdcf0"/><rect x="1" y="9" width="1" height="2" fill="#ffffff"/><rect x="3" y="9" width="3" height="2" fill="#eceaf0"/><rect x="7" y="9" width="3" height="2" fill="#e4e4f0"/><rect x="11" y="9" width="3" height="2" fill="#dcdcf0"/></svg><div class="t" style="left:127.5px;top:785px;font-size:11px;color:#000;transform:scaleX(0.8996);transform-origin:0 0;">EXISTING_INDEX_PK</div><div class="a" style="left:283px;top:83px;width:94px;height:22px;background:#9db3ca;border:1px solid #b4bcd4;border-bottom:none;border-radius:3px 3px 0 0;"></div><svg class="a" style="left:285px;top:85px" width="18" height="18" viewBox="0 0 18 18"><circle cx="8.5" cy="8.5" r="7.6" fill="#9cc4f0" stroke="#2a5cb8" stroke-width="1.3"/><circle cx="7.5" cy="6.5" r="4.5" fill="#d8ecff" opacity="0.6"/><text x="4.6" y="13.3" font-size="12.5" font-weight="bold" font-family="Liberation Sans" fill="#143a8c">?</text></svg><div class="t" style="left:305px;top:90px;font-size:11px;color:#000;transform:scaleX(0.9802);transform-origin:0 0;">Start Page</div><svg class="a" style="left:365px;top:91px" width="7" height="7" viewBox="0 0 7 7"><path d="M0.5 0.5 l5.5 5.5 M6 0.5 l-5.5 5.5" stroke="#e4eaf0" stroke-width="1.3"/></svg><div class="a" style="left:379px;top:83px;width:88px;height:22px;background:linear-gradient(180deg,#fdfdfa 0,#fbfbf6 45%,#eeede6 50%,#ecebe4 100%);border-top:2px solid #f0c878;border-radius:3px 3px 0 0;"></div><svg class="a" style="left:382px;top:86px" width="18" height="17" viewBox="0 0 18 17"><circle cx="3.5" cy="11.5" r="3.2" fill="#58c040" stroke="#2a9020"/><circle cx="12" cy="8" r="2.6" fill="#58c040" stroke="#2a9020"/><circle cx="7.5" cy="4.8" r="4.3" fill="#70d458" stroke="#2a9020"/><ellipse cx="7" cy="3.2" rx="2.2" ry="1.5" fill="#c8f0c0"/><g shape-rendering="crispEdges"><rect x="4" y="8" width="13" height="8" fill="#484848"/><rect x="5" y="9" width="11" height="6" fill="#ffffff"/><rect x="5" y="9" width="1" height="1" fill="#10103a"/><rect x="6" y="9" width="1" height="1" fill="#10103a"/><rect x="7" y="9" width="1" height="1" fill="#10103a"/><rect x="5" y="10" width="1" height="1" fill="#10103a"/><rect x="5" y="11" width="1" height="1" fill="#10103a"/><rect x="6" y="11" width="1" height="1" fill="#10103a"/><rect x="7" y="11" width="1" height="1" fill="#10103a"/><rect x="7" y="12" width="1" height="1" fill="#10103a"/><rect x="5" y="13" width="1" height="1" fill="#10103a"/><rect x="6" y="13" width="1" height="1" fill="#10103a"/><rect x="7" y="13" width="1" height="1" fill="#10103a"/><rect x="9" y="9" width="1" height="1" fill="#10103a"/><rect x="10" y="9" width="1" height="1" fill="#10103a"/><rect x="11" y="9" width="1" height="1" fill="#10103a"/><rect x="9" y="10" width="1" height="1" fill="#10103a"/><rect x="11" y="10" width="1" height="1" fill="#10103a"/><rect x="9" y="11" width="1" height="1" fill="#10103a"/><rect x="11" y="11" width="1" height="1" fill="#10103a"/><rect x="9" y="12" width="1" height="1" fill="#10103a"/><rect x="11" y="12" width="1" height="1" fill="#10103a"/><rect x="9" y="13" width="1" height="1" fill="#10103a"/><rect x="10" y="13" width="1" height="1" fill="#10103a"/><rect x="11" y="13" width="1" height="1" fill="#10103a"/><rect x="13" y="9" width="1" height="1" fill="#10103a"/><rect x="13" y="10" width="1" height="1" fill="#10103a"/><rect x="13" y="11" width="1" height="1" fill="#10103a"/><rect x="13" y="12" width="1" height="1" fill="#10103a"/><rect x="13" y="13" width="1" height="1" fill="#10103a"/><rect x="14" y="13" width="1" height="1" fill="#10103a"/><rect x="15" y="13" width="1" height="1" fill="#10103a"/></g></svg><div class="t" style="left:402px;top:90px;font-size:12px;color:#000;font-style:italic;transform:scaleX(0.9210);transform-origin:0 0;">hr @ orcl</div><svg class="a" style="left:454px;top:91px" width="7" height="7" viewBox="0 0 7 7"><path d="M0.5 0.5 l5.5 5.5 M6 0.5 l-5.5 5.5" stroke="#c0c0c0" stroke-width="1.3"/></svg><div class="a" style="left:469px;top:83px;width:91px;height:22px;background:#9db3ca;border:1px solid #b4bcd4;border-bottom:none;border-radius:3px 3px 0 0;"></div><svg class="a" style="left:471px;top:86px" width="15" height="17" viewBox="0 0 15 17"><rect x="5.5" y="0.5" width="7" height="15" fill="#f4f4f4" stroke="#303030"/><path d="M0 4.5 h5 M0 8.5 h5 M0 12.5 h5 M3 3 l2 1.5 l-2 1.5 M3 11 l2 1.5 l-2 1.5" stroke="#303030" fill="none"/></svg><div class="t" style="left:491px;top:90px;font-size:11px;color:#000;transform:scaleX(0.8817);transform-origin:0 0;">INS_BEER</div><svg class="a" style="left:550px;top:91px" width="7" height="7" viewBox="0 0 7 7"><path d="M0.5 0.5 l5.5 5.5 M6 0.5 l-5.5 5.5" stroke="#e4eaf0" stroke-width="1.3"/></svg><div class="a" style="left:563px;top:83px;width:59px;height:22px;background:#9db3ca;border:1px solid #b4bcd4;border-bottom:none;border-radius:3px 3px 0 0;"></div><svg class="a" style="left:565px;top:86px" width="18" height="17" viewBox="0 0 18 17"><circle cx="3.5" cy="11.5" r="3.2" fill="#58c040" stroke="#2a9020"/><circle cx="12" cy="8" r="2.6" fill="#58c040" stroke="#2a9020"/><circle cx="7.5" cy="4.8" r="4.3" fill="#70d458" stroke="#2a9020"/><ellipse cx="7" cy="3.2" rx="2.2" ry="1.5" fill="#c8f0c0"/><g shape-rendering="crispEdges"><rect x="4" y="8" width="13" height="8" fill="#484848"/><rect x="5" y="9" width="11" height="6" fill="#ffffff"/><rect x="5" y="9" width="1" height="1" fill="#10103a"/><rect x="6" y="9" width="1" height="1" fill="#10103a"/><rect x="7" y="9" width="1" height="1" fill="#10103a"/><rect x="5" y="10" width="1" height="1" fill="#10103a"/><rect x="5" y="11" width="1" height="1" fill="#10103a"/><rect x="6" y="11" width="1" height="1" fill="#10103a"/><rect x="7" y="11" width="1" height="1" fill="#10103a"/><rect x="7" y="12" width="1" height="1" fill="#10103a"/><rect x="5" y="13" width="1" height="1" fill="#10103a"/><rect x="6" y="13" width="1" height="1" fill="#10103a"/><rect x="7" y="13" width="1" height="1" fill="#10103a"/><rect x="9" y="9" width="1" height="1" fill="#10103a"/><rect x="10" y="9" width="1" height="1" fill="#10103a"/><rect x="11" y="9" width="1" height="1" fill="#10103a"/><rect x="9" y="10" width="1" height="1" fill="#10103a"/><rect x="11" y="10" width="1" height="1" fill="#10103a"/><rect x="9" y="11" width="1" height="1" fill="#10103a"/><rect x="11" y="11" width="1" height="1" fill="#10103a"/><rect x="9" y="12" width="1" height="1" fill="#10103a"/><rect x="11" y="12" width="1" height="1" fill="#10103a"/><rect x="9" y="13" width="1" height="1" fill="#10103a"/><rect x="10" y="13" width="1" height="1" fill="#10103a"/><rect x="11" y="13" width="1" height="1" fill="#10103a"/><rect x="13" y="9" width="1" height="1" fill="#10103a"/><rect x="13" y="10" width="1" height="1" fill="#10103a"/><rect x="13" y="11" width="1" height="1" fill="#10103a"/><rect x="13" y="12" width="1" height="1" fill="#10103a"/><rect x="13" y="13" width="1" height="1" fill="#10103a"/><rect x="14" y="13" width="1" height="1" fill="#10103a"/><rect x="15" y="13" width="1" height="1" fill="#10103a"/></g></svg><div class="t" style="left:585px;top:90px;font-size:11px;color:#000;transform:scaleX(1.0303);transform-origin:0 0;">sys</div><svg class="a" style="left:613px;top:91px" width="7" height="7" viewBox="0 0 7 7"><path d="M0.5 0.5 l5.5 5.5 M6 0.5 l-5.5 5.5" stroke="#e4eaf0" stroke-width="1.3"/></svg><div class="a" style="left:625px;top:83px;width:226px;height:22px;background:#9db3ca;border:1px solid #b4bcd4;border-bottom:none;border-radius:3px 3px 0 0;"></div><svg class="a" style="left:628px;top:86px" width="14" height="16" viewBox="0 0 14 16" shape-rendering="crispEdges"><rect x="0.5" y="0.5" width="12" height="15" fill="#f0f0fa" stroke="#4a3c98"/><path d="M2 4 h9 M2 7 h9 M2 10 h9 M2 13 h9 M5 3 v11" stroke="#7070b8"/></svg><div class="t" style="left:647px;top:90px;font-size:11px;color:#000;transform:scaleX(0.9589);transform-origin:0 0;">Sessions with Current or Previous SQL</div><svg class="a" style="left:840px;top:91px" width="7" height="7" viewBox="0 0 7 7"><path d="M0.5 0.5 l5.5 5.5 M6 0.5 l-5.5 5.5" stroke="#e4eaf0" stroke-width="1.3"/></svg><div class="a" style="left:854px;top:83px;width:63px;height:22px;background:#9db3ca;border:1px solid #b4bcd4;border-bottom:none;border-radius:3px 3px 0 0;"></div><svg class="a" style="left:857px;top:88px" width="16" height="13" viewBox="0 0 16 13" shape-rendering="crispEdges"><rect x="1" y="12" width="15" height="1" fill="#b0b0b8"/><rect x="15" y="1" width="1" height="12" fill="#b0b0b8"/><rect x="0" y="0" width="15" height="12" fill="#4a3c98"/><rect x="1" y="1" width="13" height="10" fill="#8290c0"/><rect x="1" y="1" width="1" height="1" fill="#fff"/><rect x="3" y="1" width="3" height="1" fill="#f4f4ff"/><rect x="7" y="1" width="3" height="1" fill="#f4f4ff"/><rect x="11" y="1" width="3" height="1" fill="#f4f4ff"/><rect x="1" y="3" width="1" height="2" fill="#ffffff"/><rect x="3" y="3" width="3" height="2" fill="#eceaf0"/><rect x="7" y="3" width="3" height="2" fill="#e4e4f0"/><rect x="11" y="3" width="3" height="2" fill="#dcdcf0"/><rect x="1" y="6" width="1" height="2" fill="#ffffff"/><rect x="3" y="6" width="3" height="2" fill="#eceaf0"/><rect x="7" y="6" width="3" height="2" fill="#e4e4f0"/><rect x="11" y="6" width="3" height="2" fill="#dcdcf0"/><rect x="1" y="9" width="1" height="2" fill="#ffffff"/><rect x="3" y="9" width="3" height="2" fill="#eceaf0"/><rect x="7" y="9" width="3" height="2" fill="#e4e4f0"/><rect x="11" y="9" width="3" height="2" fill="#dcdcf0"/></svg><div class="t" style="left:876px;top:90px;font-size:11px;color:#000;transform:scaleX(0.9350);transform-origin:0 0;">CFA</div><svg class="a" style="left:906px;top:91px" width="7" height="7" viewBox="0 0 7 7"><path d="M0.5 0.5 l5.5 5.5 M6 0.5 l-5.5 5.5" stroke="#e4eaf0" stroke-width="1.3"/></svg><div class="a" style="left:920px;top:83px;width:83px;height:22px;background:#9db3ca;border:1px solid #b4bcd4;border-bottom:none;border-radius:3px 3px 0 0;"></div><svg class="a" style="left:922px;top:86px" width="18" height="17" viewBox="0 0 18 17"><circle cx="3.5" cy="11.5" r="3.2" fill="#58c040" stroke="#2a9020"/><circle cx="12" cy="8" r="2.6" fill="#58c040" stroke="#2a9020"/><circle cx="7.5" cy="4.8" r="4.3" fill="#70d458" stroke="#2a9020"/><ellipse cx="7" cy="3.2" rx="2.2" ry="1.5" fill="#c8f0c0"/><g shape-rendering="crispEdges"><rect x="4" y="8" width="13" height="8" fill="#484848"/><rect x="5" y="9" width="11" height="6" fill="#ffffff"/><rect x="5" y="9" width="1" height="1" fill="#10103a"/><rect x="6" y="9" width="1" height="1" fill="#10103a"/><rect x="7" y="9" width="1" height="1" fill="#10103a"/><rect x="5" y="10" width="1" height="1" fill="#10103a"/><rect x="5" y="11" width="1" height="1" fill="#10103a"/><rect x="6" y="11" width="1" height="1" fill="#10103a"/><rect x="7" y="11" width="1" height="1" fill="#10103a"/><rect x="7" y="12" width="1" height="1" fill="#10103a"/><rect x="5" y="13" width="1" height="1" fill="#10103a"/><rect x="6" y="13" width="1" height="1" fill="#10103a"/><rect x="7" y="13" width="1" height="1" fill="#10103a"/><rect x="9" y="9" width="1" height="1" fill="#10103a"/><rect x="10" y="9" width="1" height="1" fill="#10103a"/><rect x="11" y="9" width="1" height="1" fill="#10103a"/><rect x="9" y="10" width="1" height="1" fill="#10103a"/><rect x="11" y="10" width="1" height="1" fill="#10103a"/><rect x="9" y="11" width="1" height="1" fill="#10103a"/><rect x="11" y="11" width="1" height="1" fill="#10103a"/><rect x="9" y="12" width="1" height="1" fill="#10103a"/><rect x="11" y="12" width="1" height="1" fill="#10103a"/><rect x="9" y="13" width="1" height="1" fill="#10103a"/><rect x="10" y="13" width="1" height="1" fill="#10103a"/><rect x="11" y="13" width="1" height="1" fill="#10103a"/><rect x="13" y="9" width="1" height="1" fill="#10103a"/><rect x="13" y="10" width="1" height="1" fill="#10103a"/><rect x="13" y="11" width="1" height="1" fill="#10103a"/><rect x="13" y="12" width="1" height="1" fill="#10103a"/><rect x="13" y="13" width="1" height="1" fill="#10103a"/><rect x="14" y="13" width="1" height="1" fill="#10103a"/><rect x="15" y="13" width="1" height="1" fill="#10103a"/></g></svg><div class="t" style="left:943px;top:90px;font-size:12px;color:#000;font-style:italic;transform:scaleX(0.9913);transform-origin:0 0;">hr @ orcl~1</div><div class="a" style="left:560px;top:85px;width:1px;height:8px;background:repeating-linear-gradient(180deg,#c4d4dc 0 1px,transparent 1px 2px);"></div><div class="a" style="left:562px;top:85px;width:1px;height:8px;background:repeating-linear-gradient(180deg,#c4d4dc 0 1px,transparent 1px 2px);"></div><div class="a" style="left:622px;top:85px;width:1px;height:8px;background:repeating-linear-gradient(180deg,#c4d4dc 0 1px,transparent 1px 2px);"></div><div class="a" style="left:624px;top:85px;width:1px;height:8px;background:repeating-linear-gradient(180deg,#c4d4dc 0 1px,transparent 1px 2px);"></div><div class="a" style="left:851px;top:85px;width:1px;height:8px;background:repeating-linear-gradient(180deg,#c4d4dc 0 1px,transparent 1px 2px);"></div><div class="a" style="left:853px;top:85px;width:1px;height:8px;background:repeating-linear-gradient(180deg,#c4d4dc 0 1px,transparent 1px 2px);"></div><div class="a" style="left:917px;top:85px;width:1px;height:8px;background:repeating-linear-gradient(180deg,#c4d4dc 0 1px,transparent 1px 2px);"></div><div class="a" style="left:919px;top:85px;width:1px;height:8px;background:repeating-linear-gradient(180deg,#c4d4dc 0 1px,transparent 1px 2px);"></div><div class="a" style="left:282px;top:105px;width:718px;height:700px;background:#007000;"></div><div class="a" style="left:284px;top:107px;width:716px;height:698px;background:#ecebe4;"></div><div class="a" style="left:284px;top:127px;width:716px;height:7px;background:#ffffff;"></div><div class="a" style="left:284px;top:134px;width:716px;height:1px;background:#a8a8a8;"></div><div class="a" style="left:284px;top:135px;width:716px;height:23px;background:#ecebe4;"></div><div class="a" style="left:286px;top:137px;width:77px;height:21px;background:linear-gradient(180deg,#fafaf8 0,#efeee9 42%,#d6dee2 46%,#d6dee2 100%);border:1px solid #b8b8b8;border-bottom:none;border-radius:3px 3px 0 0;"></div><div class="t" style="left:289px;top:142px;font-size:11px;color:#102030;transform:scaleX(0.9925);transform-origin:0 0;">Worksheet</div><div class="t" style="left:367px;top:143px;font-size:11px;color:#102030;transform:scaleX(0.9661);transform-origin:0 0;">Query Builder</div><div class="a" style="left:284px;top:158px;width:716px;height:1px;background:#a0a0a0;"></div><div class="a" style="left:284px;top:159px;width:716px;height:646px;background:#ffffff;"></div><div class="a" style="left:284px;top:135px;width:3px;height:670px;background:linear-gradient(90deg,#a0a0a0,#7a7a7a);"></div><div class="a" style="left:326px;top:159px;width:1px;height:643px;background:#a8a8a8;"></div><div class="a" style="left:338px;top:159px;width:1px;height:643px;background:repeating-linear-gradient(180deg,#ff2020 0 3px,transparent 3px 5px)"></div><div class="a" style="left:284px;top:802px;width:716px;height:2px;background:#9a9a9a;"></div><div class="a" style="left:286px;top:804px;width:714px;height:1px;background:#ffffff;"></div><div class="t" style="left:313px;top:164px;font-size:19.5px;color:#000;-webkit-text-stroke:0">1</div><div class="t" style="left:313px;top:188px;font-size:19.5px;color:#000;-webkit-text-stroke:0">2</div><div class="t" style="left:313px;top:212px;font-size:19.5px;color:#000;-webkit-text-stroke:0">3</div><div class="t" style="left:342px;top:213px;font-size:21px;font-family:'Liberation Mono',monospace;color:#000;white-space:pre"><span style="color:#2a5a98;-webkit-text-stroke:0.6px #2a5a98">select</span> <b>*</b> <span style="color:#2a5a98;-webkit-text-stroke:0.6px #2a5a98">from</span> beer;</div><svg class="a" style="left:431px;top:228px" width="12" height="4" viewBox="0 0 12 4"><path d="M0 3 l1.5 -2 l1.5 2 l1.5 -2 l1.5 2 l1.5 -2 l1.5 2 l1.5 -2 l1.5 2" fill="none" stroke="#f0c000" stroke-width="0.9"/></svg><svg class="a" style="left:673px;top:387px" width="9" height="16" viewBox="0 0 9 16" shape-rendering="crispEdges"><path d="M1 0.5 h3 M5 0.5 h3 M1 15.5 h3 M5 15.5 h3 M4.5 1 v14" stroke="#000" fill="none"/></svg><svg class="a" style="left:289px;top:113px" width="16" height="16" viewBox="0 0 16 16"><path d="M1.5 1 l12.5 7 l-12.5 7z" fill="#40c040" stroke="#108010" stroke-linejoin="round"/><path d="M3 3.5 l8 4.5 h-8z" fill="#90f080" opacity="0.7"/></svg><svg class="a" style="left:313px;top:112px" width="16" height="17" viewBox="0 0 16 17"><rect x="0.5" y="0.5" width="13" height="15" fill="#eef0fa" stroke="#3c3c90"/><path d="M3 3.5 h8 M3 5.5 h8 M3 7.5 h8 M3 9.5 h8 M3 11.5 h8" stroke="#5a6ab0"/><path d="M1 7 l8 4.5 l-8 4.5z" fill="#40c040" stroke="#108010"/></svg><svg class="a" style="left:335px;top:112px" width="17" height="17" viewBox="0 0 17 17"><path d="M4.5 4.0 v9 a5.5 2.0 0 0 0 11.0 0 v-9" fill="url(#cylg)" stroke="#34349a" stroke-width="1.2"/><path d="M5.1 6.5 a4.9 2.0 0 0 0 9.8 0" fill="none" stroke="#8c92b8" stroke-width="1"/><path d="M5.1 9.0 a4.9 2.0 0 0 0 9.8 0" fill="none" stroke="#8c92b8" stroke-width="1"/><path d="M5.1 11.5 a4.9 2.0 0 0 0 9.8 0" fill="none" stroke="#8c92b8" stroke-width="1"/><ellipse cx="10" cy="4.0" rx="5.5" ry="2.0" fill="#dfe4f4" stroke="#34349a" stroke-width="1.2"/><path d="M3 3 v9 h4 M3 7 h4" stroke="#404040" fill="none"/><rect x="0.5" y="0.5" width="5" height="4" fill="#e09030" stroke="#804010"/><rect x="5.5" y="5.5" width="5" height="4" fill="#e09030" stroke="#804010"/><rect x="5.5" y="10.5" width="5" height="4" fill="#e09030" stroke="#804010"/></svg><svg class="a" style="left:361px;top:118px" width="8" height="5" viewBox="0 0 8 5"><path d="M0 0 h8 l-4 4.5z" fill="#5868a8"/></svg><svg class="a" style="left:374px;top:112px" width="17" height="17" viewBox="0 0 17 17"><path d="M4.5 4.0 v9 a5.5 2.0 0 0 0 11.0 0 v-9" fill="url(#cylg)" stroke="#34349a" stroke-width="1.2"/><path d="M5.1 6.5 a4.9 2.0 0 0 0 9.8 0" fill="none" stroke="#8c92b8" stroke-width="1"/><path d="M5.1 9.0 a4.9 2.0 0 0 0 9.8 0" fill="none" stroke="#8c92b8" stroke-width="1"/><path d="M5.1 11.5 a4.9 2.0 0 0 0 9.8 0" fill="none" stroke="#8c92b8" stroke-width="1"/><ellipse cx="10" cy="4.0" rx="5.5" ry="2.0" fill="#dfe4f4" stroke="#34349a" stroke-width="1.2"/><path d="M3 3 v9 h4 M3 7 h4" stroke="#404040" fill="none"/><rect x="0.5" y="0.5" width="5" height="4" fill="#e09030" stroke="#804010"/><rect x="5.5" y="5.5" width="5" height="4" fill="#e09030" stroke="#804010"/><path d="M1 9 l7 3.5 l-7 3.5z" fill="#40c040" stroke="#108010"/></svg><svg class="a" style="left:397px;top:112px" width="17" height="17" viewBox="0 0 17 17"><path d="M1 3.0 v9 a6 2.0 0 0 0 12 0 v-9" fill="url(#cylg)" stroke="#34349a" stroke-width="1.2"/><path d="M1.6 5.5 a5.4 2.0 0 0 0 10.8 0" fill="none" stroke="#8c92b8" stroke-width="1"/><path d="M1.6 8.0 a5.4 2.0 0 0 0 10.8 0" fill="none" stroke="#8c92b8" stroke-width="1"/><path d="M1.6 10.5 a5.4 2.0 0 0 0 10.8 0" fill="none" stroke="#8c92b8" stroke-width="1"/><ellipse cx="7" cy="3.0" rx="6" ry="2.0" fill="#dfe4f4" stroke="#34349a" stroke-width="1.2"/><path d="M9 10 l6 5" stroke="#404040" stroke-width="2.5"/><circle cx="9" cy="10" r="2.6" fill="#e8e8e8" stroke="#404040"/></svg><div class="a" style="left:423px;top:115px;width:1px;height:11px;background:#a8a8a8;"></div><svg class="a" style="left:430px;top:112px" width="17" height="17" viewBox="0 0 17 17"><path d="M1 3.0 v9 a6 2.0 0 0 0 12 0 v-9" fill="url(#cylg)" stroke="#34349a" stroke-width="1.2"/><path d="M1.6 5.5 a5.4 2.0 0 0 0 10.8 0" fill="none" stroke="#8c92b8" stroke-width="1"/><path d="M1.6 8.0 a5.4 2.0 0 0 0 10.8 0" fill="none" stroke="#8c92b8" stroke-width="1"/><path d="M1.6 10.5 a5.4 2.0 0 0 0 10.8 0" fill="none" stroke="#8c92b8" stroke-width="1"/><ellipse cx="7" cy="3.0" rx="6" ry="2.0" fill="#dfe4f4" stroke="#34349a" stroke-width="1.2"/><path d="M6 11 l3 3 l6 -6" fill="none" stroke="#108010" stroke-width="3"/><path d="M6 11 l3 3 l6 -6" fill="none" stroke="#40d040" stroke-width="1.3"/></svg><svg class="a" style="left:453px;top:112px" width="17" height="17" viewBox="0 0 17 17"><path d="M1 3.0 v9 a6 2.0 0 0 0 12 0 v-9" fill="url(#cylg)" stroke="#34349a" stroke-width="1.2"/><path d="M1.6 5.5 a5.4 2.0 0 0 0 10.8 0" fill="none" stroke="#8c92b8" stroke-width="1"/><path d="M1.6 8.0 a5.4 2.0 0 0 0 10.8 0" fill="none" stroke="#8c92b8" stroke-width="1"/><path d="M1.6 10.5 a5.4 2.0 0 0 0 10.8 0" fill="none" stroke="#8c92b8" stroke-width="1"/><ellipse cx="7" cy="3.0" rx="6" ry="2.0" fill="#dfe4f4" stroke="#34349a" stroke-width="1.2"/><path d="M9 11 h4 a2.5 2.5 0 0 1 0 5 h-2" fill="none" stroke="#d02020" stroke-width="2"/><path d="M7 11 l3.5 -3 v6z" fill="#d02020"/></svg><div class="a" style="left:479px;top:115px;width:1px;height:11px;background:#a8a8a8;"></div><svg class="a" style="left:487px;top:112px" width="18" height="17" viewBox="0 0 18 17"><circle cx="4" cy="5" r="3.5" fill="#58c040" stroke="#2a9020"/><circle cx="3.5" cy="10" r="3" fill="#58c040" stroke="#2a9020"/><circle cx="11.5" cy="5" r="4" fill="#f8e020" stroke="#e02020" stroke-width="1.2"/><g shape-rendering="crispEdges"><rect x="3" y="8" width="13" height="8" fill="#484848"/><rect x="4" y="9" width="11" height="6" fill="#ffffff"/><rect x="4" y="9" width="1" height="1" fill="#10103a"/><rect x="5" y="9" width="1" height="1" fill="#10103a"/><rect x="6" y="9" width="1" height="1" fill="#10103a"/><rect x="4" y="10" width="1" height="1" fill="#10103a"/><rect x="4" y="11" width="1" height="1" fill="#10103a"/><rect x="5" y="11" width="1" height="1" fill="#10103a"/><rect x="6" y="11" width="1" height="1" fill="#10103a"/><rect x="6" y="12" width="1" height="1" fill="#10103a"/><rect x="4" y="13" width="1" height="1" fill="#10103a"/><rect x="5" y="13" width="1" height="1" fill="#10103a"/><rect x="6" y="13" width="1" height="1" fill="#10103a"/><rect x="8" y="9" width="1" height="1" fill="#10103a"/><rect x="9" y="9" width="1" height="1" fill="#10103a"/><rect x="10" y="9" width="1" height="1" fill="#10103a"/><rect x="8" y="10" width="1" height="1" fill="#10103a"/><rect x="10" y="10" width="1" height="1" fill="#10103a"/><rect x="8" y="11" width="1" height="1" fill="#10103a"/><rect x="10" y="11" width="1" height="1" fill="#10103a"/><rect x="8" y="12" width="1" height="1" fill="#10103a"/><rect x="10" y="12" width="1" height="1" fill="#10103a"/><rect x="8" y="13" width="1" height="1" fill="#10103a"/><rect x="9" y="13" width="1" height="1" fill="#10103a"/><rect x="10" y="13" width="1" height="1" fill="#10103a"/><rect x="12" y="9" width="1" height="1" fill="#10103a"/><rect x="12" y="10" width="1" height="1" fill="#10103a"/><rect x="12" y="11" width="1" height="1" fill="#10103a"/><rect x="12" y="12" width="1" height="1" fill="#10103a"/><rect x="12" y="13" width="1" height="1" fill="#10103a"/><rect x="13" y="13" width="1" height="1" fill="#10103a"/><rect x="14" y="13" width="1" height="1" fill="#10103a"/></g></svg><svg class="a" style="left:510px;top:112px" width="16" height="17" viewBox="0 0 16 17"><text x="0" y="9" font-size="11" font-family="Liberation Serif" fill="#303030">Aa</text><path d="M2.5 13.5 h11 M2.5 13.5 l3 -2.5 M2.5 13.5 l3 2.5 M13.5 13.5 l-3 -2.5 M13.5 13.5 l-3 2.5" stroke="#108810" stroke-width="1.8" fill="none"/></svg><svg class="a" style="left:533px;top:112px" width="16" height="16" viewBox="0 0 16 16"><path d="M1.5 11 l9 -9 l4 4 l-9 9z" fill="#f0a050" stroke="#904010"/><path d="M1.5 11 l3.5 -3.5 l4 4 l-3.5 3.5z" fill="#c05010"/><path d="M6 6 l5 -4" stroke="#fff0d0" stroke-width="1.5"/></svg><svg class="a" style="left:556px;top:112px" width="17" height="17" viewBox="0 0 17 17"><rect x="5.5" y="0.5" width="11" height="13" fill="#f0f0fa" stroke="#3c3c90"/><path d="M8 3.5 h7 M8 5.5 h7 M8 7.5 h7" stroke="#6070b8"/><circle cx="6" cy="11" r="5" fill="#e8f0ff" stroke="#2868c0" stroke-width="1.5"/><path d="M6 8 v3 h2.5" stroke="#c02020" fill="none"/></svg><svg class="a" style="left:579px;top:112px" width="17" height="17" viewBox="0 0 17 17"><path d="M2 14 l7 -7" stroke="#a8a8a8" stroke-width="3"/><circle cx="8.5" cy="6" r="3.5" fill="#b4b4b4"/><rect x="11.5" y="4.5" width="4" height="3" fill="#c8c8c8" stroke="#989898"/><rect x="11.5" y="8.5" width="4" height="3" fill="#c8c8c8" stroke="#989898"/><rect x="11.5" y="12.5" width="4" height="3" fill="#c8c8c8" stroke="#989898"/></svg><div class="a" style="left:604px;top:115px;width:1px;height:11px;background:#a8a8a8;"></div><svg class="a" style="left:14px;top:51px" width="16" height="16" viewBox="0 0 16 16"><rect x="0.5" y="1.5" width="12" height="14" fill="#e8e8f4" stroke="#404080"/><path d="M1 15 l11 -11 v11z" fill="#c8c0e0"/><path d="M11 0 v8 M7 4 h8 M8.3 1.3 l5.4 5.4 M13.7 1.3 l-5.4 5.4" stroke="#c02000" stroke-width="1.6"/><circle cx="11" cy="4" r="2.3" fill="#ffe020"/></svg><svg class="a" style="left:37px;top:51px" width="17" height="15" viewBox="0 0 17 15"><path d="M0.5 2.5 h5 l1.5 1.5 h6.5 v9.5 h-13z" fill="#f4e098" stroke="#a08030"/><path d="M2.5 7.5 h13 l-2 6 h-13z" fill="#f0d890" stroke="#a08030"/></svg><svg class="a" style="left:60px;top:51px" width="15" height="15" viewBox="0 0 15 15"><rect x="0.5" y="0.5" width="14" height="14" rx="1.5" fill="#5050a8" stroke="#2c2c70"/><rect x="3" y="1" width="9" height="6" fill="#e0e0f0"/><rect x="3" y="9" width="8" height="5" fill="#fff"/><rect x="4" y="10" width="2" height="3" fill="#2c2c70"/></svg><svg class="a" style="left:83px;top:50px" width="16" height="17" viewBox="0 0 16 17"><rect x="3.5" y="0.5" width="12" height="12" rx="1.5" fill="#5050a8" stroke="#2c2c70"/><rect x="6" y="1" width="7" height="3" fill="#e0e0f0"/><rect x="0.5" y="3.5" width="12" height="13" rx="1.5" fill="#5050a8" stroke="#2c2c70"/><rect x="3" y="4" width="7" height="5" fill="#e0e0f0"/><rect x="3" y="11" width="7" height="5" fill="#fff"/><rect x="4" y="12" width="2" height="3" fill="#2c2c70"/></svg><svg class="a" style="left:119px;top:50px" width="17" height="17" viewBox="0 0 17 17"><path d="M5 7 C 8 2, 15 2, 15 8 C 15 11, 12 13, 9 15" fill="none" stroke="#1850a8" stroke-width="3.6"/><path d="M5 7 C 8 2, 15 2, 15 8 C 15 11, 12 13, 9 15" fill="none" stroke="#58a8f0" stroke-width="1.6"/><path d="M0.5 9 l4 -6 l5 5z" fill="#58a8f0" stroke="#1850a8"/></svg><svg class="a" style="left:143px;top:50px" width="17" height="17" viewBox="0 0 17 17"><path d="M11 7 C 8 2, 1 2, 1.5 8 C 1.5 11, 4 13, 7 15" fill="none" stroke="#989898" stroke-width="3.2"/><path d="M15.5 9 l-4 -6 l-5 5z" fill="#a0a0a0" stroke="#8a8a8a"/></svg><svg class="a" style="left:179px;top:51px" width="17" height="17" viewBox="0 0 17 17"><circle cx="8" cy="8" r="7.5" fill="#28a028" stroke="#0a5a0a"/><path d="M3.5 8 l4.5 -4.5 v3 h4.5 v3 h-4.5 v3z" fill="#f4f4f4"/></svg><svg class="a" style="left:204px;top:57px" width="8" height="5" viewBox="0 0 8 5"><path d="M0 0 h8 l-4 4.5z" fill="#d8dce4"/></svg><svg class="a" style="left:219px;top:51px" width="17" height="17" viewBox="0 0 17 17"><circle cx="8" cy="8" r="7.5" fill="#a4a4a4" stroke="#707070"/><path d="M12.5 8 l-4.5 -4.5 v3 h-4.5 v3 h4.5 v3z" fill="#f4f4f4"/></svg><svg class="a" style="left:243px;top:57px" width="8" height="5" viewBox="0 0 8 5"><path d="M0 0 h8 l-4 4.5z" fill="#8a8060"/></svg><svg class="a" style="left:272px;top:50px" width="18" height="17" viewBox="0 0 18 17"><circle cx="3.5" cy="11.5" r="3.2" fill="#58c040" stroke="#2a9020"/><circle cx="12" cy="8" r="2.6" fill="#58c040" stroke="#2a9020"/><circle cx="7.5" cy="4.8" r="4.3" fill="#70d458" stroke="#2a9020"/><ellipse cx="7" cy="3.2" rx="2.2" ry="1.5" fill="#c8f0c0"/><g shape-rendering="crispEdges"><rect x="4" y="8" width="13" height="8" fill="#484848"/><rect x="5" y="9" width="11" height="6" fill="#ffffff"/><rect x="5" y="9" width="1" height="1" fill="#10103a"/><rect x="6" y="9" width="1" height="1" fill="#10103a"/><rect x="7" y="9" width="1" height="1" fill="#10103a"/><rect x="5" y="10" width="1" height="1" fill="#10103a"/><rect x="5" y="11" width="1" height="1" fill="#10103a"/><rect x="6" y="11" width="1" height="1" fill="#10103a"/><rect x="7" y="11" width="1" height="1" fill="#10103a"/><rect x="7" y="12" width="1" height="1" fill="#10103a"/><rect x="5" y="13" width="1" height="1" fill="#10103a"/><rect x="6" y="13" width="1" height="1" fill="#10103a"/><rect x="7" y="13" width="1" height="1" fill="#10103a"/><rect x="9" y="9" width="1" height="1" fill="#10103a"/><rect x="10" y="9" width="1" height="1" fill="#10103a"/><rect x="11" y="9" width="1" height="1" fill="#10103a"/><rect x="9" y="10" width="1" height="1" fill="#10103a"/><rect x="11" y="10" width="1" height="1" fill="#10103a"/><rect x="9" y="11" width="1" height="1" fill="#10103a"/><rect x="11" y="11" width="1" height="1" fill="#10103a"/><rect x="9" y="12" width="1" height="1" fill="#10103a"/><rect x="11" y="12" width="1" height="1" fill="#10103a"/><rect x="9" y="13" width="1" height="1" fill="#10103a"/><rect x="10" y="13" width="1" height="1" fill="#10103a"/><rect x="11" y="13" width="1" height="1" fill="#10103a"/><rect x="13" y="9" width="1" height="1" fill="#10103a"/><rect x="13" y="10" width="1" height="1" fill="#10103a"/><rect x="13" y="11" width="1" height="1" fill="#10103a"/><rect x="13" y="12" width="1" height="1" fill="#10103a"/><rect x="13" y="13" width="1" height="1" fill="#10103a"/><rect x="14" y="13" width="1" height="1" fill="#10103a"/><rect x="15" y="13" width="1" height="1" fill="#10103a"/></g></svg><svg class="a" style="left:296px;top:57px" width="8" height="5" viewBox="0 0 8 5"><path d="M0 0 h8 l-4 4.5z" fill="#d8dce4"/></svg><svg class="a" style="left:325px;top:52px" width="17" height="15" viewBox="0 0 17 15"><path d="M1.5 8 l2.5 -6.5 h3 v7 M14.5 8 l-2.5 -6.5 h-3 v7" fill="#706868" stroke="#302828"/><rect x="6.5" y="3" width="3" height="5" fill="#383030"/><circle cx="4" cy="10.5" r="3.8" fill="#2070d8" stroke="#202838"/><circle cx="12" cy="10.5" r="3.8" fill="#2070d8" stroke="#202838"/><circle cx="3.5" cy="10" r="1.3" fill="#a0d0ff"/><circle cx="11.5" cy="10" r="1.3" fill="#a0d0ff"/></svg><svg class="a" style="left:378px;top:51px" width="12" height="17" viewBox="0 0 12 17"><path d="M0.5 0.5 v14 l3.5 -3.2 l2.8 5 l2.2 -1.2 l-2.7 -4.8 h4.7z" fill="#fff" stroke="#000"/></svg><svg class="a" style="left:399px;top:52px" width="16" height="13" viewBox="0 0 16 13" shape-rendering="crispEdges"><rect x="1" y="12" width="15" height="1" fill="#b0b0b8"/><rect x="15" y="1" width="1" height="12" fill="#b0b0b8"/><rect x="0" y="0" width="15" height="12" fill="#4a3c98"/><rect x="1" y="1" width="13" height="10" fill="#8290c0"/><rect x="1" y="1" width="1" height="1" fill="#fff"/><rect x="3" y="1" width="3" height="1" fill="#f4f4ff"/><rect x="7" y="1" width="3" height="1" fill="#f4f4ff"/><rect x="11" y="1" width="3" height="1" fill="#f4f4ff"/><rect x="1" y="3" width="1" height="2" fill="#ffffff"/><rect x="3" y="3" width="3" height="2" fill="#eceaf0"/><rect x="7" y="3" width="3" height="2" fill="#e4e4f0"/><rect x="11" y="3" width="3" height="2" fill="#dcdcf0"/><rect x="1" y="6" width="1" height="2" fill="#ffffff"/><rect x="3" y="6" width="3" height="2" fill="#eceaf0"/><rect x="7" y="6" width="3" height="2" fill="#e4e4f0"/><rect x="11" y="6" width="3" height="2" fill="#dcdcf0"/><rect x="1" y="9" width="1" height="2" fill="#ffffff"/><rect x="3" y="9" width="3" height="2" fill="#eceaf0"/><rect x="7" y="9" width="3" height="2" fill="#e4e4f0"/><rect x="11" y="9" width="3" height="2" fill="#dcdcf0"/></svg><svg class="a" style="left:422px;top:51px" width="17" height="16" viewBox="0 0 17 16"><g transform="translate(0,3)"><rect x="1" y="12" width="15" height="1" fill="#8890a8"/><rect x="15" y="1" width="1" height="12" fill="#8890a8"/><rect x="0" y="0" width="15" height="12" fill="#4a3c98"/><rect x="1" y="1" width="13" height="10" fill="#8492c4"/><rect x="3" y="2" width="3" height="2" fill="#e8e8f4"/><rect x="3" y="5" width="3" height="2" fill="#e8e8f4"/><rect x="3" y="8" width="3" height="2" fill="#e8e8f4"/><rect x="7" y="2" width="3" height="2" fill="#e8e8f4"/><rect x="7" y="5" width="3" height="2" fill="#e8e8f4"/><rect x="7" y="8" width="3" height="2" fill="#e8e8f4"/><rect x="11" y="2" width="3" height="2" fill="#e8e8f4"/><rect x="11" y="5" width="3" height="2" fill="#e8e8f4"/><rect x="11" y="8" width="3" height="2" fill="#e8e8f4"/></g><path d="M1 3.5 a3 3 0 0 0 6 0 M9 3.5 a3 3 0 0 0 6 0 M7 3 h2 M1 3.5 l1 -3 M15 3.5 l-1 -3" fill="#b8e0f0" stroke="#101010" stroke-width="1.2"/></svg><svg class="a" style="left:445px;top:51px" width="17" height="16" viewBox="0 0 17 16"><rect x="2" y="14" width="9" height="1" fill="#8890a8"/><rect x="0" y="3" width="10" height="11" fill="#4a3c98"/><rect x="1" y="4" width="8" height="9" fill="#f2f2fa"/><rect x="9" y="0" width="7" height="6" fill="#4a3c98"/><rect x="10" y="1" width="5" height="4" fill="#f2f2fa"/><rect x="9" y="9" width="7" height="6" fill="#4a3c98"/><rect x="10" y="10" width="5" height="4" fill="#f2f2fa"/><rect x="2" y="5" width="1" height="1" fill="#8a7a9a"/><rect x="4" y="5" width="1" height="1" fill="#8a7a9a"/><rect x="2" y="7" width="1" height="1" fill="#3080f0"/><rect x="4" y="7" width="1" height="1" fill="#3080f0"/><rect x="2" y="9" width="1" height="1" fill="#e83020"/><rect x="4" y="9" width="1" height="1" fill="#e83020"/><rect x="2" y="11" width="1" height="1" fill="#8a7a9a"/><rect x="11" y="2" width="1" height="1" fill="#8a7a9a"/><rect x="13" y="2" width="1" height="1" fill="#8a7a9a"/><rect x="11" y="11" width="1" height="1" fill="#8a7a9a"/><rect x="13" y="11" width="1" height="1" fill="#8a7a9a"/><path d="M6 7.5 l5 -5 M8 2.5 h3 v3 M6 7.5 l5 5 M8 12.5 h3 v-3" stroke="#000" stroke-width="1.6" fill="none"/></svg><svg class="a" style="left:468px;top:51px" width="17" height="16" viewBox="0 0 17 16"><g transform="translate(16,0) scale(-1,1)"><rect x="2" y="14" width="9" height="1" fill="#8890a8"/><rect x="0" y="3" width="10" height="11" fill="#4a3c98"/><rect x="1" y="4" width="8" height="9" fill="#f2f2fa"/><rect x="9" y="0" width="7" height="6" fill="#4a3c98"/><rect x="10" y="1" width="5" height="4" fill="#f2f2fa"/><rect x="9" y="9" width="7" height="6" fill="#4a3c98"/><rect x="10" y="10" width="5" height="4" fill="#f2f2fa"/><rect x="2" y="5" width="1" height="1" fill="#8a7a9a"/><rect x="4" y="5" width="1" height="1" fill="#8a7a9a"/><rect x="2" y="7" width="1" height="1" fill="#3080f0"/><rect x="4" y="7" width="1" height="1" fill="#3080f0"/><rect x="2" y="9" width="1" height="1" fill="#e83020"/><rect x="4" y="9" width="1" height="1" fill="#e83020"/><rect x="2" y="11" width="1" height="1" fill="#8a7a9a"/><rect x="11" y="2" width="1" height="1" fill="#8a7a9a"/><rect x="13" y="2" width="1" height="1" fill="#8a7a9a"/><rect x="11" y="11" width="1" height="1" fill="#8a7a9a"/><rect x="13" y="11" width="1" height="1" fill="#8a7a9a"/></g><path d="M6 2 l5 5 M11 4 v3 h-3 M6 12.5 l5 -5" stroke="#000" stroke-width="1.6" fill="none"/></svg><svg class="a" style="left:491px;top:50px" width="17" height="17" viewBox="0 0 17 17"><rect x="1" y="3" width="6" height="7" rx="1.5" fill="#f8e020" stroke="#b86800" stroke-width="1.4"/><rect x="3.2" y="5" width="1.6" height="3" fill="#8098b8"/><rect x="7" y="5" width="9" height="2.5" fill="#f8e020" stroke="#b86800" stroke-width="1"/><path d="M5 14.5 h6 v-4 h-2 l3.5 -3.5 l3.5 3.5 h-2 v6 h-9z" fill="#58e058" stroke="#0a6a0a" stroke-width="1.3"/></svg><svg class="a" style="left:515px;top:54px" width="14" height="9" viewBox="0 0 14 9"><circle cx="1.5" cy="4.5" r="1.3" fill="#20a020"/><circle cx="5" cy="4.5" r="1.3" fill="#20a020"/><path d="M8 0.5 l4 4 l-4 4" fill="none" stroke="#20a020" stroke-width="2"/></svg><svg class="a" style="left:538px;top:51px" width="14" height="15" viewBox="0 0 14 15"><rect x="0.5" y="0.5" width="13" height="9" rx="1" fill="#eeeee8" stroke="#3a70c8"/><path d="M3 10 v5 M11 10 v5 M1 12.5 h12" stroke="#3a70c8" stroke-width="1.2"/></svg><svg class="a" style="left:561px;top:51px" width="14" height="15" viewBox="0 0 14 15"><rect x="0.5" y="0.5" width="13" height="9" rx="1" fill="#eeeee8" stroke="#3a70c8"/><path d="M3 10 v5 M11 10 v5 M1 12.5 h12" stroke="#3a70c8" stroke-width="1.2"/><path d="M4 4.5 h5 M6.5 2 v5" stroke="#2050a0" stroke-width="1.3"/></svg><svg class="a" style="left:584px;top:51px" width="14" height="15" viewBox="0 0 14 15"><rect x="0.5" y="0.5" width="13" height="9" rx="1" fill="#eeeee8" stroke="#3a70c8"/><path d="M3 10 v5 M11 10 v5 M1 12.5 h12" stroke="#3a70c8" stroke-width="1.2"/><path d="M4 4.5 h5" stroke="#2050a0" stroke-width="1.3"/></svg><svg class="a" style="left:606px;top:51px" width="15" height="14" viewBox="0 0 15 14"><path d="M0.5 0.5 h10 l4 4 v9 h-14z" fill="#f8e440" stroke="#a88000"/><path d="M10.5 0.5 v4 h4" fill="none" stroke="#a88000"/></svg><svg class="a" style="left:629px;top:51px" width="15" height="15" viewBox="0 0 15 15"><path d="M2 2 l11 11 M13 2 l-11 11" stroke="#901010" stroke-width="4"/><path d="M2 2 l11 11 M13 2 l-11 11" stroke="#f03820" stroke-width="2.2"/></svg><svg class="a" style="left:652px;top:52px" width="15" height="13" viewBox="0 0 15 13"><path d="M7 1 l-5.5 5.5 l5.5 5.5 M13 1 l-5.5 5.5 l5.5 5.5" fill="none" stroke="#1a58b8" stroke-width="3.5"/><path d="M7 1 l-5.5 5.5 l5.5 5.5 M13 1 l-5.5 5.5 l5.5 5.5" fill="none" stroke="#78c0f8" stroke-width="1.5"/></svg><svg class="a" style="left:675px;top:51px" width="16" height="16" viewBox="0 0 16 16"><path d="M9.5 9.5 l5 5" stroke="#b02020" stroke-width="3"/><circle cx="6" cy="6" r="5" fill="#d8ecff" stroke="#204060" stroke-width="1.3"/><path d="M3.5 6 h5 M6 3.5 v5" stroke="#1a50b0" stroke-width="1.8"/></svg><svg class="a" style="left:698px;top:51px" width="16" height="16" viewBox="0 0 16 16"><path d="M9.5 9.5 l5 5" stroke="#b02020" stroke-width="3"/><circle cx="6" cy="6" r="5" fill="#d8ecff" stroke="#204060" stroke-width="1.3"/><path d="M3.5 6 h5" stroke="#1a50b0" stroke-width="1.8"/></svg><svg class="a" style="left:722px;top:51px" width="14" height="15" viewBox="0 0 14 15"><rect x="0.5" y="0.5" width="13" height="14" fill="#f8f8f8" stroke="#606080"/><circle cx="7" cy="7.5" r="3.5" fill="none" stroke="#2060c0" stroke-width="1.5"/><path d="M7 2 v11 M1.5 7.5 h11" stroke="#2060c0" stroke-width="1.3"/></svg><svg class="a" style="left:746px;top:52px" width="13" height="13" viewBox="0 0 13 13"><path d="M5 1 h7 v7 M8 12 h-7 v-7" fill="none" stroke="#2070d0" stroke-width="2"/></svg><svg class="a" style="left:767px;top:51px" width="17" height="15" viewBox="0 0 17 15"><path d="M1.5 8 l2.5 -6.5 h3 v7 M14.5 8 l-2.5 -6.5 h-3 v7" fill="#706868" stroke="#302828"/><rect x="6.5" y="3" width="3" height="5" fill="#383030"/><circle cx="4" cy="10.5" r="3.8" fill="#2070d8" stroke="#202838"/><circle cx="12" cy="10.5" r="3.8" fill="#2070d8" stroke="#202838"/><circle cx="3.5" cy="10" r="1.3" fill="#a0d0ff"/><circle cx="11.5" cy="10" r="1.3" fill="#a0d0ff"/></svg><svg class="a" style="left:790px;top:51px" width="14" height="16" viewBox="0 0 14 16"><rect x="0.5" y="0.5" width="13" height="15" fill="#ececf4" stroke="#6060a0"/><path d="M3.5 4.5 v7 a3.5 1.5 0 0 0 7.0 0 v-7" fill="#c8c8c8" stroke="#606060" stroke-width="1.2"/><path d="M4.1 6.4 a2.9 1.5 0 0 0 5.8 0" fill="none" stroke="#8c92b8" stroke-width="1"/><path d="M4.1 8.4 a2.9 1.5 0 0 0 5.8 0" fill="none" stroke="#8c92b8" stroke-width="1"/><path d="M4.1 10.3 a2.9 1.5 0 0 0 5.8 0" fill="none" stroke="#8c92b8" stroke-width="1"/><ellipse cx="7" cy="4.5" rx="3.5" ry="1.5" fill="#e0e0e0" stroke="#606060" stroke-width="1.2"/></svg><svg class="a" style="left:813px;top:51px" width="16" height="15" viewBox="0 0 16 15"><path d="M0.5 7.5 l7 -7 v4 h8 v6 h-8 v4z" fill="#58a8e8" stroke="#2060b0"/><path d="M3 7 l4 -4 v2.5 h7" stroke="#b8e0ff" fill="none"/></svg><svg class="a" style="left:836px;top:51px" width="16" height="15" viewBox="0 0 16 15"><path d="M15.5 7.5 l-7 -7 v4 h-8 v6 h8 v4z" fill="#58a8e8" stroke="#2060b0"/><path d="M13 7 l-4 -4 v2.5 h-7" stroke="#b8e0ff" fill="none"/></svg></body></html>
